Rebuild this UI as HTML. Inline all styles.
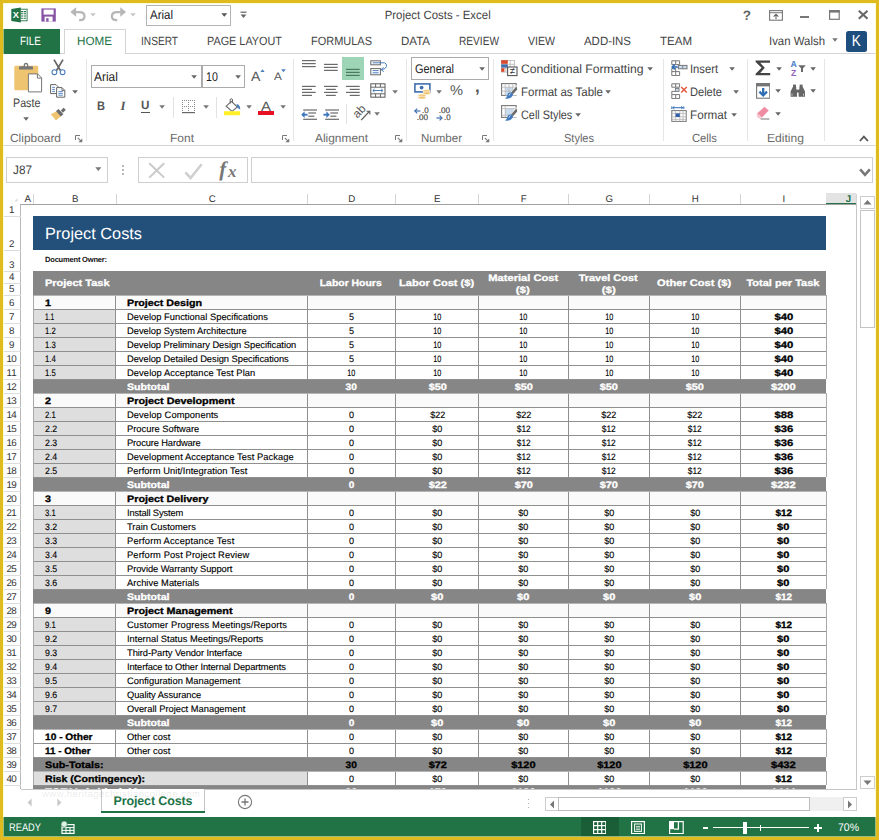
<!DOCTYPE html>
<html lang="en"><head><meta charset="utf-8"><title>Project Costs - Excel</title>
<style>
html,body{margin:0;padding:0}
body{width:879px;height:840px;background:#dfbb1f;position:relative;overflow:hidden;font-family:'Liberation Sans',sans-serif}
.b{position:absolute;display:block}
.t{position:absolute;white-space:pre;display:block;text-rendering:geometricPrecision}
</style></head><body>
<div class="b" style="left:3px;top:3px;width:873px;height:833.5px;background:#fff;"></div>
<span class="t" style="left:382.31px;top:8.60px;font:normal normal 12px/13.80px 'Liberation Sans', sans-serif;color:#444;transform:scaleX(0.9517);transform-origin:50% 50%;">Project Costs - Excel</span>
<div class="b" style="left:3px;top:29px;width:57px;height:24.7px;background:#217346;"></div>
<span class="t" style="left:20.00px;top:35.40px;font:normal normal 12px/13.80px 'Liberation Sans', sans-serif;color:#fff;transform:scaleX(0.8286);transform-origin:0 50%;">FILE</span>
<div class="b" style="left:64px;top:29px;width:62px;height:25.2px;background:#fff;border:1px solid #d4d4d4;box-sizing:border-box;border-bottom:none;"></div>
<span class="t" style="left:77.00px;top:35.40px;font:normal normal 12px/13.80px 'Liberation Sans', sans-serif;color:#217346;transform:scaleX(0.9722);transform-origin:0 50%;">HOME</span>
<span class="t" style="left:141.00px;top:35.40px;font:normal normal 12px/13.80px 'Liberation Sans', sans-serif;color:#444;transform:scaleX(0.8448);transform-origin:0 50%;">INSERT</span>
<span class="t" style="left:207.00px;top:35.40px;font:normal normal 12px/13.80px 'Liberation Sans', sans-serif;color:#444;transform:scaleX(0.9045);transform-origin:0 50%;">PAGE LAYOUT</span>
<span class="t" style="left:311.00px;top:35.40px;font:normal normal 12px/13.80px 'Liberation Sans', sans-serif;color:#444;transform:scaleX(0.9147);transform-origin:0 50%;">FORMULAS</span>
<span class="t" style="left:401.00px;top:35.40px;font:normal normal 12px/13.80px 'Liberation Sans', sans-serif;color:#444;transform:scaleX(0.9592);transform-origin:0 50%;">DATA</span>
<span class="t" style="left:459.00px;top:35.40px;font:normal normal 12px/13.80px 'Liberation Sans', sans-serif;color:#444;transform:scaleX(0.8449);transform-origin:0 50%;">REVIEW</span>
<span class="t" style="left:528.00px;top:35.40px;font:normal normal 12px/13.80px 'Liberation Sans', sans-serif;color:#444;transform:scaleX(0.8803);transform-origin:0 50%;">VIEW</span>
<span class="t" style="left:584.00px;top:35.40px;font:normal normal 12px/13.80px 'Liberation Sans', sans-serif;color:#444;transform:scaleX(0.9525);transform-origin:0 50%;">ADD-INS</span>
<span class="t" style="left:660.00px;top:35.40px;font:normal normal 12px/13.80px 'Liberation Sans', sans-serif;color:#444;transform:scaleX(0.9597);transform-origin:0 50%;">TEAM</span>
<span class="t" style="left:768.50px;top:35.30px;font:normal normal 12px/13.80px 'Liberation Sans', sans-serif;color:#444;transform:scaleX(0.9504);transform-origin:0 50%;">Ivan Walsh</span>
<div class="b" style="left:845.6px;top:31px;width:21.6px;height:21px;background:#1e4e7e;border-radius:2.5px;"></div>
<span class="t" style="left:851.16px;top:32.60px;font:normal normal 16px/18.40px 'Liberation Sans', sans-serif;color:#fff;transform:scaleX(0.8433);transform-origin:50% 50%;">K</span>
<div class="b" style="left:60px;top:53.2px;width:4px;height:1px;background:#d4d4d4;"></div>
<div class="b" style="left:126px;top:53.2px;width:750px;height:1px;background:#d4d4d4;"></div>
<div class="b" style="left:3px;top:145.3px;width:873px;height:1px;background:#d4d4d4;"></div>
<span class="t" style="left:10.00px;top:132.27px;font:normal normal 11.7px/13.45px 'Liberation Sans', sans-serif;color:#6a6a6a;transform:scaleX(1.0194);transform-origin:0 50%;">Clipboard</span>
<span class="t" style="left:170.00px;top:132.27px;font:normal normal 11.7px/13.45px 'Liberation Sans', sans-serif;color:#6a6a6a;transform:scaleX(1.0261);transform-origin:0 50%;">Font</span>
<span class="t" style="left:315.00px;top:132.27px;font:normal normal 11.7px/13.45px 'Liberation Sans', sans-serif;color:#6a6a6a;transform:scaleX(1.0195);transform-origin:0 50%;">Alignment</span>
<span class="t" style="left:421.00px;top:132.27px;font:normal normal 11.7px/13.45px 'Liberation Sans', sans-serif;color:#6a6a6a;transform:scaleX(0.9861);transform-origin:0 50%;">Number</span>
<span class="t" style="left:564.00px;top:132.27px;font:normal normal 11.7px/13.45px 'Liberation Sans', sans-serif;color:#6a6a6a;transform:scaleX(0.9426);transform-origin:0 50%;">Styles</span>
<span class="t" style="left:692.00px;top:132.27px;font:normal normal 11.7px/13.45px 'Liberation Sans', sans-serif;color:#6a6a6a;transform:scaleX(0.9621);transform-origin:0 50%;">Cells</span>
<span class="t" style="left:767.00px;top:132.27px;font:normal normal 11.7px/13.45px 'Liberation Sans', sans-serif;color:#6a6a6a;transform:scaleX(1.0350);transform-origin:0 50%;">Editing</span>
<div class="b" style="left:86.3px;top:59px;width:1px;height:82px;background:#e6e6e6;"></div>
<div class="b" style="left:293px;top:59px;width:1px;height:82px;background:#e6e6e6;"></div>
<div class="b" style="left:405.8px;top:59px;width:1px;height:82px;background:#e6e6e6;"></div>
<div class="b" style="left:493.3px;top:59px;width:1px;height:82px;background:#e6e6e6;"></div>
<div class="b" style="left:663px;top:59px;width:1px;height:82px;background:#e6e6e6;"></div>
<div class="b" style="left:747.3px;top:59px;width:1px;height:82px;background:#e6e6e6;"></div>
<div class="b" style="left:824px;top:59px;width:1px;height:82px;background:#e6e6e6;"></div>
<div class="b" style="left:5.5px;top:157px;width:102.3px;height:26px;background:#fff;border:1px solid #cfcfcf;box-sizing:border-box;"></div>
<span class="t" style="left:13.00px;top:163.13px;font:normal normal 12.3px/14.14px 'Liberation Sans', sans-serif;color:#444;transform:scaleX(0.9582);transform-origin:0 50%;">J87</span>
<div class="b" style="left:138.2px;top:157px;width:109.6px;height:26px;background:#fff;border:1px solid #cfcfcf;box-sizing:border-box;"></div>
<div class="b" style="left:251px;top:157px;width:621.6px;height:26px;background:#fff;border:1px solid #cfcfcf;box-sizing:border-box;"></div>
<span class="t" style="left:24.57px;top:193.82px;font:normal normal 9.7px/11.15px 'Liberation Sans', sans-serif;color:#333;">A</span>
<div class="b" style="left:33px;top:194px;width:1px;height:10px;background:#d4d4d4;"></div>
<span class="t" style="left:72.07px;top:193.82px;font:normal normal 9.7px/11.15px 'Liberation Sans', sans-serif;color:#333;">B</span>
<div class="b" style="left:116px;top:194px;width:1px;height:10px;background:#d4d4d4;"></div>
<span class="t" style="left:208.80px;top:193.82px;font:normal normal 9.7px/11.15px 'Liberation Sans', sans-serif;color:#333;">C</span>
<div class="b" style="left:307px;top:194px;width:1px;height:10px;background:#d4d4d4;"></div>
<span class="t" style="left:348.30px;top:193.82px;font:normal normal 9.7px/11.15px 'Liberation Sans', sans-serif;color:#333;">D</span>
<div class="b" style="left:395px;top:194px;width:1px;height:10px;background:#d4d4d4;"></div>
<span class="t" style="left:434.07px;top:193.82px;font:normal normal 9.7px/11.15px 'Liberation Sans', sans-serif;color:#333;">E</span>
<div class="b" style="left:478px;top:194px;width:1px;height:10px;background:#d4d4d4;"></div>
<span class="t" style="left:520.84px;top:193.82px;font:normal normal 9.7px/11.15px 'Liberation Sans', sans-serif;color:#333;">F</span>
<div class="b" style="left:568px;top:194px;width:1px;height:10px;background:#d4d4d4;"></div>
<span class="t" style="left:605.53px;top:193.82px;font:normal normal 9.7px/11.15px 'Liberation Sans', sans-serif;color:#333;">G</span>
<div class="b" style="left:649px;top:194px;width:1px;height:10px;background:#d4d4d4;"></div>
<span class="t" style="left:691.80px;top:193.82px;font:normal normal 9.7px/11.15px 'Liberation Sans', sans-serif;color:#333;">H</span>
<div class="b" style="left:740px;top:194px;width:1px;height:10px;background:#d4d4d4;"></div>
<span class="t" style="left:782.45px;top:193.82px;font:normal normal 9.7px/11.15px 'Liberation Sans', sans-serif;color:#333;">I</span>
<div class="b" style="left:826px;top:194px;width:1px;height:10px;background:#d4d4d4;"></div>
<div class="b" style="left:826px;top:193px;width:30px;height:11px;background:#e3e3e3;"></div>
<div class="b" style="left:826px;top:203px;width:30px;height:2px;background:#217346;"></div>
<span class="t" style="left:845.80px;top:193.62px;font:normal bold 9.7px/11.15px 'Liberation Sans', sans-serif;color:#217346;">J</span>
<div class="b" style="left:856px;top:194px;width:1px;height:10px;background:#d4d4d4;"></div>
<div class="b" style="left:20.3px;top:204px;width:836px;height:1px;background:#a2a2a2;"></div>
<svg class="b" style="left:13.6px;top:197.6px" width="4" height="4" viewBox="0 0 4 4"><path d="M3.6 0.2 V3.6 H0.2 Z" fill="#dcdcdc"/></svg>
<div class="b" style="left:20.2px;top:204px;width:1px;height:585px;background:#b8b8b8;"></div>
<div class="b" style="left:856px;top:204px;width:1px;height:585px;background:#c6c6c6;"></div>
<span class="t" style="left:8.97px;top:205.06px;font:normal normal 9.8px/11.27px 'Liberation Sans', sans-serif;color:#333;">1</span>
<div class="b" style="left:4px;top:216px;width:17px;height:1px;background:#dcdcdc;"></div>
<span class="t" style="left:8.97px;top:239.06px;font:normal normal 9.8px/11.27px 'Liberation Sans', sans-serif;color:#333;">2</span>
<div class="b" style="left:4px;top:250px;width:17px;height:1px;background:#dcdcdc;"></div>
<span class="t" style="left:8.97px;top:260.06px;font:normal normal 9.8px/11.27px 'Liberation Sans', sans-serif;color:#333;">3</span>
<div class="b" style="left:4px;top:271px;width:17px;height:1px;background:#dcdcdc;"></div>
<span class="t" style="left:8.97px;top:272.06px;font:normal normal 9.8px/11.27px 'Liberation Sans', sans-serif;color:#333;">4</span>
<div class="b" style="left:4px;top:283px;width:17px;height:1px;background:#dcdcdc;"></div>
<span class="t" style="left:8.97px;top:284.06px;font:normal normal 9.8px/11.27px 'Liberation Sans', sans-serif;color:#333;">5</span>
<div class="b" style="left:4px;top:295px;width:17px;height:1px;background:#dcdcdc;"></div>
<span class="t" style="left:8.97px;top:298.06px;font:normal normal 9.8px/11.27px 'Liberation Sans', sans-serif;color:#333;">6</span>
<div class="b" style="left:4px;top:309px;width:17px;height:1px;background:#dcdcdc;"></div>
<span class="t" style="left:8.97px;top:312.06px;font:normal normal 9.8px/11.27px 'Liberation Sans', sans-serif;color:#333;">7</span>
<div class="b" style="left:4px;top:323px;width:17px;height:1px;background:#dcdcdc;"></div>
<span class="t" style="left:8.97px;top:326.06px;font:normal normal 9.8px/11.27px 'Liberation Sans', sans-serif;color:#333;">8</span>
<div class="b" style="left:4px;top:337px;width:17px;height:1px;background:#dcdcdc;"></div>
<span class="t" style="left:8.97px;top:340.06px;font:normal normal 9.8px/11.27px 'Liberation Sans', sans-serif;color:#333;">9</span>
<div class="b" style="left:4px;top:351px;width:17px;height:1px;background:#dcdcdc;"></div>
<span class="t" style="left:6.60px;top:354.06px;font:normal normal 9.8px/11.27px 'Liberation Sans', sans-serif;color:#333;letter-spacing:-0.706px;">10</span>
<div class="b" style="left:4px;top:365px;width:17px;height:1px;background:#dcdcdc;"></div>
<span class="t" style="left:6.60px;top:368.06px;font:normal normal 9.8px/11.27px 'Liberation Sans', sans-serif;color:#333;letter-spacing:0.028px;">11</span>
<div class="b" style="left:4px;top:379px;width:17px;height:1px;background:#dcdcdc;"></div>
<span class="t" style="left:6.60px;top:382.06px;font:normal normal 9.8px/11.27px 'Liberation Sans', sans-serif;color:#333;letter-spacing:-0.706px;">12</span>
<div class="b" style="left:4px;top:393px;width:17px;height:1px;background:#dcdcdc;"></div>
<span class="t" style="left:6.60px;top:396.06px;font:normal normal 9.8px/11.27px 'Liberation Sans', sans-serif;color:#333;letter-spacing:-0.706px;">13</span>
<div class="b" style="left:4px;top:407px;width:17px;height:1px;background:#dcdcdc;"></div>
<span class="t" style="left:6.60px;top:410.06px;font:normal normal 9.8px/11.27px 'Liberation Sans', sans-serif;color:#333;letter-spacing:-0.706px;">14</span>
<div class="b" style="left:4px;top:421px;width:17px;height:1px;background:#dcdcdc;"></div>
<span class="t" style="left:6.60px;top:424.06px;font:normal normal 9.8px/11.27px 'Liberation Sans', sans-serif;color:#333;letter-spacing:-0.706px;">15</span>
<div class="b" style="left:4px;top:435px;width:17px;height:1px;background:#dcdcdc;"></div>
<span class="t" style="left:6.60px;top:438.06px;font:normal normal 9.8px/11.27px 'Liberation Sans', sans-serif;color:#333;letter-spacing:-0.706px;">16</span>
<div class="b" style="left:4px;top:449px;width:17px;height:1px;background:#dcdcdc;"></div>
<span class="t" style="left:6.60px;top:452.06px;font:normal normal 9.8px/11.27px 'Liberation Sans', sans-serif;color:#333;letter-spacing:-0.706px;">17</span>
<div class="b" style="left:4px;top:463px;width:17px;height:1px;background:#dcdcdc;"></div>
<span class="t" style="left:6.60px;top:466.06px;font:normal normal 9.8px/11.27px 'Liberation Sans', sans-serif;color:#333;letter-spacing:-0.706px;">18</span>
<div class="b" style="left:4px;top:477px;width:17px;height:1px;background:#dcdcdc;"></div>
<span class="t" style="left:6.60px;top:480.06px;font:normal normal 9.8px/11.27px 'Liberation Sans', sans-serif;color:#333;letter-spacing:-0.706px;">19</span>
<div class="b" style="left:4px;top:491px;width:17px;height:1px;background:#dcdcdc;"></div>
<span class="t" style="left:6.60px;top:494.06px;font:normal normal 9.8px/11.27px 'Liberation Sans', sans-serif;color:#333;letter-spacing:-0.706px;">20</span>
<div class="b" style="left:4px;top:505px;width:17px;height:1px;background:#dcdcdc;"></div>
<span class="t" style="left:6.60px;top:508.07px;font:normal normal 9.8px/11.27px 'Liberation Sans', sans-serif;color:#333;letter-spacing:-0.706px;">21</span>
<div class="b" style="left:4px;top:519px;width:17px;height:1px;background:#dcdcdc;"></div>
<span class="t" style="left:6.60px;top:522.07px;font:normal normal 9.8px/11.27px 'Liberation Sans', sans-serif;color:#333;letter-spacing:-0.706px;">22</span>
<div class="b" style="left:4px;top:533px;width:17px;height:1px;background:#dcdcdc;"></div>
<span class="t" style="left:6.60px;top:536.07px;font:normal normal 9.8px/11.27px 'Liberation Sans', sans-serif;color:#333;letter-spacing:-0.706px;">23</span>
<div class="b" style="left:4px;top:547px;width:17px;height:1px;background:#dcdcdc;"></div>
<span class="t" style="left:6.60px;top:550.07px;font:normal normal 9.8px/11.27px 'Liberation Sans', sans-serif;color:#333;letter-spacing:-0.706px;">24</span>
<div class="b" style="left:4px;top:561px;width:17px;height:1px;background:#dcdcdc;"></div>
<span class="t" style="left:6.60px;top:564.07px;font:normal normal 9.8px/11.27px 'Liberation Sans', sans-serif;color:#333;letter-spacing:-0.706px;">25</span>
<div class="b" style="left:4px;top:575px;width:17px;height:1px;background:#dcdcdc;"></div>
<span class="t" style="left:6.60px;top:578.07px;font:normal normal 9.8px/11.27px 'Liberation Sans', sans-serif;color:#333;letter-spacing:-0.706px;">26</span>
<div class="b" style="left:4px;top:589px;width:17px;height:1px;background:#dcdcdc;"></div>
<span class="t" style="left:6.60px;top:592.07px;font:normal normal 9.8px/11.27px 'Liberation Sans', sans-serif;color:#333;letter-spacing:-0.706px;">27</span>
<div class="b" style="left:4px;top:603px;width:17px;height:1px;background:#dcdcdc;"></div>
<span class="t" style="left:6.60px;top:606.07px;font:normal normal 9.8px/11.27px 'Liberation Sans', sans-serif;color:#333;letter-spacing:-0.706px;">28</span>
<div class="b" style="left:4px;top:617px;width:17px;height:1px;background:#dcdcdc;"></div>
<span class="t" style="left:6.60px;top:620.07px;font:normal normal 9.8px/11.27px 'Liberation Sans', sans-serif;color:#333;letter-spacing:-0.706px;">29</span>
<div class="b" style="left:4px;top:631px;width:17px;height:1px;background:#dcdcdc;"></div>
<span class="t" style="left:6.60px;top:634.07px;font:normal normal 9.8px/11.27px 'Liberation Sans', sans-serif;color:#333;letter-spacing:-0.706px;">30</span>
<div class="b" style="left:4px;top:645px;width:17px;height:1px;background:#dcdcdc;"></div>
<span class="t" style="left:6.60px;top:648.07px;font:normal normal 9.8px/11.27px 'Liberation Sans', sans-serif;color:#333;letter-spacing:-0.706px;">31</span>
<div class="b" style="left:4px;top:659px;width:17px;height:1px;background:#dcdcdc;"></div>
<span class="t" style="left:6.60px;top:662.07px;font:normal normal 9.8px/11.27px 'Liberation Sans', sans-serif;color:#333;letter-spacing:-0.706px;">32</span>
<div class="b" style="left:4px;top:673px;width:17px;height:1px;background:#dcdcdc;"></div>
<span class="t" style="left:6.60px;top:676.07px;font:normal normal 9.8px/11.27px 'Liberation Sans', sans-serif;color:#333;letter-spacing:-0.706px;">33</span>
<div class="b" style="left:4px;top:687px;width:17px;height:1px;background:#dcdcdc;"></div>
<span class="t" style="left:6.60px;top:690.07px;font:normal normal 9.8px/11.27px 'Liberation Sans', sans-serif;color:#333;letter-spacing:-0.706px;">34</span>
<div class="b" style="left:4px;top:701px;width:17px;height:1px;background:#dcdcdc;"></div>
<span class="t" style="left:6.60px;top:704.07px;font:normal normal 9.8px/11.27px 'Liberation Sans', sans-serif;color:#333;letter-spacing:-0.706px;">35</span>
<div class="b" style="left:4px;top:715px;width:17px;height:1px;background:#dcdcdc;"></div>
<span class="t" style="left:6.60px;top:718.07px;font:normal normal 9.8px/11.27px 'Liberation Sans', sans-serif;color:#333;letter-spacing:-0.706px;">36</span>
<div class="b" style="left:4px;top:729px;width:17px;height:1px;background:#dcdcdc;"></div>
<span class="t" style="left:6.60px;top:732.07px;font:normal normal 9.8px/11.27px 'Liberation Sans', sans-serif;color:#333;letter-spacing:-0.706px;">37</span>
<div class="b" style="left:4px;top:743px;width:17px;height:1px;background:#dcdcdc;"></div>
<span class="t" style="left:6.60px;top:746.07px;font:normal normal 9.8px/11.27px 'Liberation Sans', sans-serif;color:#333;letter-spacing:-0.706px;">38</span>
<div class="b" style="left:4px;top:757px;width:17px;height:1px;background:#dcdcdc;"></div>
<span class="t" style="left:6.60px;top:760.07px;font:normal normal 9.8px/11.27px 'Liberation Sans', sans-serif;color:#333;letter-spacing:-0.706px;">39</span>
<div class="b" style="left:4px;top:771px;width:17px;height:1px;background:#dcdcdc;"></div>
<span class="t" style="left:6.60px;top:774.07px;font:normal normal 9.8px/11.27px 'Liberation Sans', sans-serif;color:#333;letter-spacing:-0.706px;">40</span>
<div class="b" style="left:4px;top:785px;width:17px;height:1px;background:#dcdcdc;"></div>
<div class="b" style="left:33px;top:216px;width:793px;height:33.6px;background:#22507a;"></div>
<span class="t" style="left:45.00px;top:225.13px;font:normal normal 16.3px/18.75px 'Liberation Sans', sans-serif;color:#fff;letter-spacing:0.014px;">Project Costs</span>
<span class="t" style="left:45.00px;top:256.39px;font:normal bold 7.5px/8.62px 'Liberation Sans', sans-serif;color:#111;letter-spacing:-0.185px;">Document Owner:</span>
<div class="b" style="left:33px;top:271px;width:793px;height:24.3px;background:#868686;"></div>
<span class="t" style="left:45.00px;top:277.94px;font:normal bold 9.33px/10.73px 'Liberation Sans', sans-serif;color:#fff;transform:scaleX(1.1771);transform-origin:0 50%;-webkit-text-stroke:0.3px #fff;">Project Task</span>
<span class="t" style="left:323.27px;top:277.94px;font:normal bold 9.33px/10.73px 'Liberation Sans', sans-serif;color:#fff;transform:scaleX(1.1177);transform-origin:50% 50%;-webkit-text-stroke:0.3px #fff;">Labor Hours</span>
<span class="t" style="left:405.38px;top:277.94px;font:normal bold 9.33px/10.73px 'Liberation Sans', sans-serif;color:#fff;transform:scaleX(1.1861);transform-origin:50% 50%;-webkit-text-stroke:0.3px #fff;">Labor Cost ($)</span>
<span class="t" style="left:493.71px;top:272.64px;font:normal bold 9.33px/10.73px 'Liberation Sans', sans-serif;color:#fff;transform:scaleX(1.1950);transform-origin:50% 50%;-webkit-text-stroke:0.3px #fff;">Material Cost</span>
<span class="t" style="left:517.30px;top:284.64px;font:normal bold 9.33px/10.73px 'Liberation Sans', sans-serif;color:#fff;transform:scaleX(1.2274);transform-origin:50% 50%;-webkit-text-stroke:0.3px #fff;">($)</span>
<span class="t" style="left:583.35px;top:272.64px;font:normal bold 9.33px/10.73px 'Liberation Sans', sans-serif;color:#fff;transform:scaleX(1.1730);transform-origin:50% 50%;-webkit-text-stroke:0.3px #fff;">Travel Cost</span>
<span class="t" style="left:602.80px;top:284.64px;font:normal bold 9.33px/10.73px 'Liberation Sans', sans-serif;color:#fff;transform:scaleX(1.2274);transform-origin:50% 50%;-webkit-text-stroke:0.3px #fff;">($)</span>
<span class="t" style="left:663.40px;top:277.94px;font:normal bold 9.33px/10.73px 'Liberation Sans', sans-serif;color:#fff;transform:scaleX(1.1897);transform-origin:50% 50%;-webkit-text-stroke:0.3px #fff;">Other Cost ($)</span>
<span class="t" style="left:752.07px;top:277.94px;font:normal bold 9.33px/10.73px 'Liberation Sans', sans-serif;color:#fff;transform:scaleX(1.1801);transform-origin:50% 50%;-webkit-text-stroke:0.3px #fff;">Total per Task</span>
<div class="b" style="left:33px;top:296px;width:793px;height:13px;background:#fafafa;"></div>
<span class="t" style="left:45.00px;top:298.49px;font:normal bold 9.33px/10.73px 'Liberation Sans', sans-serif;color:#000;transform:scaleX(1.1600);transform-origin:0 50%;-webkit-text-stroke:0.3px #000;">1</span>
<span class="t" style="left:127.00px;top:298.49px;font:normal bold 9.33px/10.73px 'Liberation Sans', sans-serif;color:#000;transform:scaleX(1.1481);transform-origin:0 50%;-webkit-text-stroke:0.3px #000;">Project Design</span>
<div class="b" style="left:33px;top:309px;width:82px;height:14px;background:#dedede;"></div>
<span class="t" style="left:45.00px;top:312.04px;font:normal normal 9.33px/10.73px 'Liberation Sans', sans-serif;color:#000;transform:scaleX(0.7200);transform-origin:0 50%;-webkit-text-stroke:0.12px #000;">1.1</span>
<span class="t" style="left:127.00px;top:312.04px;font:normal normal 9.33px/10.73px 'Liberation Sans', sans-serif;color:#000;letter-spacing:0.025px;-webkit-text-stroke:0.12px #000;">Develop Functional Specifications</span>
<span class="t" style="left:348.90px;top:312.04px;font:normal normal 9.33px/10.73px 'Liberation Sans', sans-serif;color:#000;transform:scaleX(0.9700);transform-origin:50% 50%;-webkit-text-stroke:0.12px #000;">5</span>
<span class="t" style="left:432.30px;top:312.04px;font:normal normal 9.33px/10.73px 'Liberation Sans', sans-serif;color:#000;transform:scaleX(0.7800);transform-origin:50% 50%;-webkit-text-stroke:0.12px #000;">10</span>
<span class="t" style="left:518.30px;top:312.04px;font:normal normal 9.33px/10.73px 'Liberation Sans', sans-serif;color:#000;transform:scaleX(0.7800);transform-origin:50% 50%;-webkit-text-stroke:0.12px #000;">10</span>
<span class="t" style="left:603.80px;top:312.04px;font:normal normal 9.33px/10.73px 'Liberation Sans', sans-serif;color:#000;transform:scaleX(0.7800);transform-origin:50% 50%;-webkit-text-stroke:0.12px #000;">10</span>
<span class="t" style="left:689.80px;top:312.04px;font:normal normal 9.33px/10.73px 'Liberation Sans', sans-serif;color:#000;transform:scaleX(0.7800);transform-origin:50% 50%;-webkit-text-stroke:0.12px #000;">10</span>
<span class="t" style="left:775.71px;top:312.49px;font:normal bold 9.33px/10.73px 'Liberation Sans', sans-serif;color:#000;transform:scaleX(1.2068);transform-origin:50% 50%;-webkit-text-stroke:0.3px #000;">$40</span>
<div class="b" style="left:33px;top:323px;width:82px;height:14px;background:#dedede;"></div>
<span class="t" style="left:45.00px;top:326.04px;font:normal normal 9.33px/10.73px 'Liberation Sans', sans-serif;color:#000;transform:scaleX(0.8300);transform-origin:0 50%;-webkit-text-stroke:0.12px #000;">1.2</span>
<span class="t" style="left:127.00px;top:326.04px;font:normal normal 9.33px/10.73px 'Liberation Sans', sans-serif;color:#000;letter-spacing:0.001px;-webkit-text-stroke:0.12px #000;">Develop System Architecture</span>
<span class="t" style="left:348.90px;top:326.04px;font:normal normal 9.33px/10.73px 'Liberation Sans', sans-serif;color:#000;transform:scaleX(0.9700);transform-origin:50% 50%;-webkit-text-stroke:0.12px #000;">5</span>
<span class="t" style="left:432.30px;top:326.04px;font:normal normal 9.33px/10.73px 'Liberation Sans', sans-serif;color:#000;transform:scaleX(0.7800);transform-origin:50% 50%;-webkit-text-stroke:0.12px #000;">10</span>
<span class="t" style="left:518.30px;top:326.04px;font:normal normal 9.33px/10.73px 'Liberation Sans', sans-serif;color:#000;transform:scaleX(0.7800);transform-origin:50% 50%;-webkit-text-stroke:0.12px #000;">10</span>
<span class="t" style="left:603.80px;top:326.04px;font:normal normal 9.33px/10.73px 'Liberation Sans', sans-serif;color:#000;transform:scaleX(0.7800);transform-origin:50% 50%;-webkit-text-stroke:0.12px #000;">10</span>
<span class="t" style="left:689.80px;top:326.04px;font:normal normal 9.33px/10.73px 'Liberation Sans', sans-serif;color:#000;transform:scaleX(0.7800);transform-origin:50% 50%;-webkit-text-stroke:0.12px #000;">10</span>
<span class="t" style="left:775.71px;top:326.49px;font:normal bold 9.33px/10.73px 'Liberation Sans', sans-serif;color:#000;transform:scaleX(1.2068);transform-origin:50% 50%;-webkit-text-stroke:0.3px #000;">$40</span>
<div class="b" style="left:33px;top:337px;width:82px;height:14px;background:#dedede;"></div>
<span class="t" style="left:45.00px;top:340.04px;font:normal normal 9.33px/10.73px 'Liberation Sans', sans-serif;color:#000;transform:scaleX(0.8300);transform-origin:0 50%;-webkit-text-stroke:0.12px #000;">1.3</span>
<span class="t" style="left:127.00px;top:340.04px;font:normal normal 9.33px/10.73px 'Liberation Sans', sans-serif;color:#000;letter-spacing:-0.033px;-webkit-text-stroke:0.12px #000;">Develop Preliminary Design Specification</span>
<span class="t" style="left:348.90px;top:340.04px;font:normal normal 9.33px/10.73px 'Liberation Sans', sans-serif;color:#000;transform:scaleX(0.9700);transform-origin:50% 50%;-webkit-text-stroke:0.12px #000;">5</span>
<span class="t" style="left:432.30px;top:340.04px;font:normal normal 9.33px/10.73px 'Liberation Sans', sans-serif;color:#000;transform:scaleX(0.7800);transform-origin:50% 50%;-webkit-text-stroke:0.12px #000;">10</span>
<span class="t" style="left:518.30px;top:340.04px;font:normal normal 9.33px/10.73px 'Liberation Sans', sans-serif;color:#000;transform:scaleX(0.7800);transform-origin:50% 50%;-webkit-text-stroke:0.12px #000;">10</span>
<span class="t" style="left:603.80px;top:340.04px;font:normal normal 9.33px/10.73px 'Liberation Sans', sans-serif;color:#000;transform:scaleX(0.7800);transform-origin:50% 50%;-webkit-text-stroke:0.12px #000;">10</span>
<span class="t" style="left:689.80px;top:340.04px;font:normal normal 9.33px/10.73px 'Liberation Sans', sans-serif;color:#000;transform:scaleX(0.7800);transform-origin:50% 50%;-webkit-text-stroke:0.12px #000;">10</span>
<span class="t" style="left:775.71px;top:340.49px;font:normal bold 9.33px/10.73px 'Liberation Sans', sans-serif;color:#000;transform:scaleX(1.2068);transform-origin:50% 50%;-webkit-text-stroke:0.3px #000;">$40</span>
<div class="b" style="left:33px;top:351px;width:82px;height:14px;background:#dedede;"></div>
<span class="t" style="left:45.00px;top:354.04px;font:normal normal 9.33px/10.73px 'Liberation Sans', sans-serif;color:#000;transform:scaleX(0.8300);transform-origin:0 50%;-webkit-text-stroke:0.12px #000;">1.4</span>
<span class="t" style="left:127.00px;top:354.04px;font:normal normal 9.33px/10.73px 'Liberation Sans', sans-serif;color:#000;letter-spacing:-0.028px;-webkit-text-stroke:0.12px #000;">Develop Detailed Design Specifications</span>
<span class="t" style="left:348.90px;top:354.04px;font:normal normal 9.33px/10.73px 'Liberation Sans', sans-serif;color:#000;transform:scaleX(0.9700);transform-origin:50% 50%;-webkit-text-stroke:0.12px #000;">5</span>
<span class="t" style="left:432.30px;top:354.04px;font:normal normal 9.33px/10.73px 'Liberation Sans', sans-serif;color:#000;transform:scaleX(0.7800);transform-origin:50% 50%;-webkit-text-stroke:0.12px #000;">10</span>
<span class="t" style="left:518.30px;top:354.04px;font:normal normal 9.33px/10.73px 'Liberation Sans', sans-serif;color:#000;transform:scaleX(0.7800);transform-origin:50% 50%;-webkit-text-stroke:0.12px #000;">10</span>
<span class="t" style="left:603.80px;top:354.04px;font:normal normal 9.33px/10.73px 'Liberation Sans', sans-serif;color:#000;transform:scaleX(0.7800);transform-origin:50% 50%;-webkit-text-stroke:0.12px #000;">10</span>
<span class="t" style="left:689.80px;top:354.04px;font:normal normal 9.33px/10.73px 'Liberation Sans', sans-serif;color:#000;transform:scaleX(0.7800);transform-origin:50% 50%;-webkit-text-stroke:0.12px #000;">10</span>
<span class="t" style="left:775.71px;top:354.49px;font:normal bold 9.33px/10.73px 'Liberation Sans', sans-serif;color:#000;transform:scaleX(1.2068);transform-origin:50% 50%;-webkit-text-stroke:0.3px #000;">$40</span>
<div class="b" style="left:33px;top:365px;width:82px;height:14px;background:#dedede;"></div>
<span class="t" style="left:45.00px;top:368.04px;font:normal normal 9.33px/10.73px 'Liberation Sans', sans-serif;color:#000;transform:scaleX(0.8300);transform-origin:0 50%;-webkit-text-stroke:0.12px #000;">1.5</span>
<span class="t" style="left:127.00px;top:368.04px;font:normal normal 9.33px/10.73px 'Liberation Sans', sans-serif;color:#000;letter-spacing:0.091px;-webkit-text-stroke:0.12px #000;">Develop Acceptance Test Plan</span>
<span class="t" style="left:346.30px;top:368.04px;font:normal normal 9.33px/10.73px 'Liberation Sans', sans-serif;color:#000;transform:scaleX(0.7800);transform-origin:50% 50%;-webkit-text-stroke:0.12px #000;">10</span>
<span class="t" style="left:432.30px;top:368.04px;font:normal normal 9.33px/10.73px 'Liberation Sans', sans-serif;color:#000;transform:scaleX(0.7800);transform-origin:50% 50%;-webkit-text-stroke:0.12px #000;">10</span>
<span class="t" style="left:518.30px;top:368.04px;font:normal normal 9.33px/10.73px 'Liberation Sans', sans-serif;color:#000;transform:scaleX(0.7800);transform-origin:50% 50%;-webkit-text-stroke:0.12px #000;">10</span>
<span class="t" style="left:603.80px;top:368.04px;font:normal normal 9.33px/10.73px 'Liberation Sans', sans-serif;color:#000;transform:scaleX(0.7800);transform-origin:50% 50%;-webkit-text-stroke:0.12px #000;">10</span>
<span class="t" style="left:689.80px;top:368.04px;font:normal normal 9.33px/10.73px 'Liberation Sans', sans-serif;color:#000;transform:scaleX(0.7800);transform-origin:50% 50%;-webkit-text-stroke:0.12px #000;">10</span>
<span class="t" style="left:775.71px;top:368.49px;font:normal bold 9.33px/10.73px 'Liberation Sans', sans-serif;color:#000;transform:scaleX(1.2068);transform-origin:50% 50%;-webkit-text-stroke:0.3px #000;">$40</span>
<div class="b" style="left:33px;top:379px;width:793px;height:14.3px;background:#868686;"></div>
<span class="t" style="left:127.00px;top:382.49px;font:normal bold 9.33px/10.73px 'Liberation Sans', sans-serif;color:#fff;transform:scaleX(1.1390);transform-origin:0 50%;-webkit-text-stroke:0.3px #fff;">Subtotal</span>
<span class="t" style="left:346.30px;top:382.49px;font:normal bold 9.33px/10.73px 'Liberation Sans', sans-serif;color:#fff;transform:scaleX(1.0875);transform-origin:50% 50%;-webkit-text-stroke:0.3px #fff;">30</span>
<span class="t" style="left:429.71px;top:382.49px;font:normal bold 9.33px/10.73px 'Liberation Sans', sans-serif;color:#fff;transform:scaleX(1.1747);transform-origin:50% 50%;-webkit-text-stroke:0.3px #fff;">$50</span>
<span class="t" style="left:515.71px;top:382.49px;font:normal bold 9.33px/10.73px 'Liberation Sans', sans-serif;color:#fff;transform:scaleX(1.1747);transform-origin:50% 50%;-webkit-text-stroke:0.3px #fff;">$50</span>
<span class="t" style="left:601.21px;top:382.49px;font:normal bold 9.33px/10.73px 'Liberation Sans', sans-serif;color:#fff;transform:scaleX(1.1747);transform-origin:50% 50%;-webkit-text-stroke:0.3px #fff;">$50</span>
<span class="t" style="left:687.21px;top:382.49px;font:normal bold 9.33px/10.73px 'Liberation Sans', sans-serif;color:#fff;transform:scaleX(1.1747);transform-origin:50% 50%;-webkit-text-stroke:0.3px #fff;">$50</span>
<span class="t" style="left:773.12px;top:382.49px;font:normal bold 9.33px/10.73px 'Liberation Sans', sans-serif;color:#fff;transform:scaleX(1.2039);transform-origin:50% 50%;-webkit-text-stroke:0.3px #fff;">$200</span>
<div class="b" style="left:33px;top:394px;width:793px;height:13px;background:#fafafa;"></div>
<span class="t" style="left:45.00px;top:396.49px;font:normal bold 9.33px/10.73px 'Liberation Sans', sans-serif;color:#000;transform:scaleX(1.1600);transform-origin:0 50%;-webkit-text-stroke:0.3px #000;">2</span>
<span class="t" style="left:127.00px;top:396.49px;font:normal bold 9.33px/10.73px 'Liberation Sans', sans-serif;color:#000;transform:scaleX(1.1584);transform-origin:0 50%;-webkit-text-stroke:0.3px #000;">Project Development</span>
<div class="b" style="left:33px;top:407px;width:82px;height:14px;background:#dedede;"></div>
<span class="t" style="left:45.00px;top:410.04px;font:normal normal 9.33px/10.73px 'Liberation Sans', sans-serif;color:#000;transform:scaleX(0.8300);transform-origin:0 50%;-webkit-text-stroke:0.12px #000;">2.1</span>
<span class="t" style="left:127.00px;top:410.04px;font:normal normal 9.33px/10.73px 'Liberation Sans', sans-serif;color:#000;letter-spacing:0.093px;-webkit-text-stroke:0.12px #000;">Develop Components</span>
<span class="t" style="left:348.90px;top:410.04px;font:normal normal 9.33px/10.73px 'Liberation Sans', sans-serif;color:#000;transform:scaleX(0.9700);transform-origin:50% 50%;-webkit-text-stroke:0.12px #000;">0</span>
<span class="t" style="left:429.71px;top:410.04px;font:normal normal 9.33px/10.73px 'Liberation Sans', sans-serif;color:#000;transform:scaleX(0.9700);transform-origin:50% 50%;-webkit-text-stroke:0.12px #000;">$22</span>
<span class="t" style="left:515.71px;top:410.04px;font:normal normal 9.33px/10.73px 'Liberation Sans', sans-serif;color:#000;transform:scaleX(0.9700);transform-origin:50% 50%;-webkit-text-stroke:0.12px #000;">$22</span>
<span class="t" style="left:601.21px;top:410.04px;font:normal normal 9.33px/10.73px 'Liberation Sans', sans-serif;color:#000;transform:scaleX(0.9700);transform-origin:50% 50%;-webkit-text-stroke:0.12px #000;">$22</span>
<span class="t" style="left:687.21px;top:410.04px;font:normal normal 9.33px/10.73px 'Liberation Sans', sans-serif;color:#000;transform:scaleX(0.9700);transform-origin:50% 50%;-webkit-text-stroke:0.12px #000;">$22</span>
<span class="t" style="left:775.71px;top:410.49px;font:normal bold 9.33px/10.73px 'Liberation Sans', sans-serif;color:#000;transform:scaleX(1.2068);transform-origin:50% 50%;-webkit-text-stroke:0.3px #000;">$88</span>
<div class="b" style="left:33px;top:421px;width:82px;height:14px;background:#dedede;"></div>
<span class="t" style="left:45.00px;top:424.04px;font:normal normal 9.33px/10.73px 'Liberation Sans', sans-serif;color:#000;transform:scaleX(0.9400);transform-origin:0 50%;-webkit-text-stroke:0.12px #000;">2.2</span>
<span class="t" style="left:127.00px;top:424.04px;font:normal normal 9.33px/10.73px 'Liberation Sans', sans-serif;color:#000;letter-spacing:0.015px;-webkit-text-stroke:0.12px #000;">Procure Software</span>
<span class="t" style="left:348.90px;top:424.04px;font:normal normal 9.33px/10.73px 'Liberation Sans', sans-serif;color:#000;transform:scaleX(0.9700);transform-origin:50% 50%;-webkit-text-stroke:0.12px #000;">0</span>
<span class="t" style="left:432.30px;top:424.04px;font:normal normal 9.33px/10.73px 'Liberation Sans', sans-serif;color:#000;transform:scaleX(0.9700);transform-origin:50% 50%;-webkit-text-stroke:0.12px #000;">$0</span>
<span class="t" style="left:515.71px;top:424.04px;font:normal normal 9.33px/10.73px 'Liberation Sans', sans-serif;color:#000;transform:scaleX(0.9000);transform-origin:50% 50%;-webkit-text-stroke:0.12px #000;">$12</span>
<span class="t" style="left:601.21px;top:424.04px;font:normal normal 9.33px/10.73px 'Liberation Sans', sans-serif;color:#000;transform:scaleX(0.9000);transform-origin:50% 50%;-webkit-text-stroke:0.12px #000;">$12</span>
<span class="t" style="left:687.21px;top:424.04px;font:normal normal 9.33px/10.73px 'Liberation Sans', sans-serif;color:#000;transform:scaleX(0.9000);transform-origin:50% 50%;-webkit-text-stroke:0.12px #000;">$12</span>
<span class="t" style="left:775.71px;top:424.49px;font:normal bold 9.33px/10.73px 'Liberation Sans', sans-serif;color:#000;transform:scaleX(1.2068);transform-origin:50% 50%;-webkit-text-stroke:0.3px #000;">$36</span>
<div class="b" style="left:33px;top:435px;width:82px;height:14px;background:#dedede;"></div>
<span class="t" style="left:45.00px;top:438.04px;font:normal normal 9.33px/10.73px 'Liberation Sans', sans-serif;color:#000;transform:scaleX(0.9400);transform-origin:0 50%;-webkit-text-stroke:0.12px #000;">2.3</span>
<span class="t" style="left:127.00px;top:438.04px;font:normal normal 9.33px/10.73px 'Liberation Sans', sans-serif;color:#000;letter-spacing:-0.127px;-webkit-text-stroke:0.12px #000;">Procure Hardware</span>
<span class="t" style="left:348.90px;top:438.04px;font:normal normal 9.33px/10.73px 'Liberation Sans', sans-serif;color:#000;transform:scaleX(0.9700);transform-origin:50% 50%;-webkit-text-stroke:0.12px #000;">0</span>
<span class="t" style="left:432.30px;top:438.04px;font:normal normal 9.33px/10.73px 'Liberation Sans', sans-serif;color:#000;transform:scaleX(0.9700);transform-origin:50% 50%;-webkit-text-stroke:0.12px #000;">$0</span>
<span class="t" style="left:515.71px;top:438.04px;font:normal normal 9.33px/10.73px 'Liberation Sans', sans-serif;color:#000;transform:scaleX(0.9000);transform-origin:50% 50%;-webkit-text-stroke:0.12px #000;">$12</span>
<span class="t" style="left:601.21px;top:438.04px;font:normal normal 9.33px/10.73px 'Liberation Sans', sans-serif;color:#000;transform:scaleX(0.9000);transform-origin:50% 50%;-webkit-text-stroke:0.12px #000;">$12</span>
<span class="t" style="left:687.21px;top:438.04px;font:normal normal 9.33px/10.73px 'Liberation Sans', sans-serif;color:#000;transform:scaleX(0.9000);transform-origin:50% 50%;-webkit-text-stroke:0.12px #000;">$12</span>
<span class="t" style="left:775.71px;top:438.49px;font:normal bold 9.33px/10.73px 'Liberation Sans', sans-serif;color:#000;transform:scaleX(1.2068);transform-origin:50% 50%;-webkit-text-stroke:0.3px #000;">$36</span>
<div class="b" style="left:33px;top:449px;width:82px;height:14px;background:#dedede;"></div>
<span class="t" style="left:45.00px;top:452.04px;font:normal normal 9.33px/10.73px 'Liberation Sans', sans-serif;color:#000;transform:scaleX(0.9400);transform-origin:0 50%;-webkit-text-stroke:0.12px #000;">2.4</span>
<span class="t" style="left:127.00px;top:452.04px;font:normal normal 9.33px/10.73px 'Liberation Sans', sans-serif;color:#000;letter-spacing:0.076px;-webkit-text-stroke:0.12px #000;">Development Acceptance Test Package</span>
<span class="t" style="left:348.90px;top:452.04px;font:normal normal 9.33px/10.73px 'Liberation Sans', sans-serif;color:#000;transform:scaleX(0.9700);transform-origin:50% 50%;-webkit-text-stroke:0.12px #000;">0</span>
<span class="t" style="left:432.30px;top:452.04px;font:normal normal 9.33px/10.73px 'Liberation Sans', sans-serif;color:#000;transform:scaleX(0.9700);transform-origin:50% 50%;-webkit-text-stroke:0.12px #000;">$0</span>
<span class="t" style="left:515.71px;top:452.04px;font:normal normal 9.33px/10.73px 'Liberation Sans', sans-serif;color:#000;transform:scaleX(0.9000);transform-origin:50% 50%;-webkit-text-stroke:0.12px #000;">$12</span>
<span class="t" style="left:601.21px;top:452.04px;font:normal normal 9.33px/10.73px 'Liberation Sans', sans-serif;color:#000;transform:scaleX(0.9000);transform-origin:50% 50%;-webkit-text-stroke:0.12px #000;">$12</span>
<span class="t" style="left:687.21px;top:452.04px;font:normal normal 9.33px/10.73px 'Liberation Sans', sans-serif;color:#000;transform:scaleX(0.9000);transform-origin:50% 50%;-webkit-text-stroke:0.12px #000;">$12</span>
<span class="t" style="left:775.71px;top:452.49px;font:normal bold 9.33px/10.73px 'Liberation Sans', sans-serif;color:#000;transform:scaleX(1.2068);transform-origin:50% 50%;-webkit-text-stroke:0.3px #000;">$36</span>
<div class="b" style="left:33px;top:463px;width:82px;height:14px;background:#dedede;"></div>
<span class="t" style="left:45.00px;top:466.04px;font:normal normal 9.33px/10.73px 'Liberation Sans', sans-serif;color:#000;transform:scaleX(0.9400);transform-origin:0 50%;-webkit-text-stroke:0.12px #000;">2.5</span>
<span class="t" style="left:127.00px;top:466.04px;font:normal normal 9.33px/10.73px 'Liberation Sans', sans-serif;color:#000;letter-spacing:0.062px;-webkit-text-stroke:0.12px #000;">Perform Unit/Integration Test</span>
<span class="t" style="left:348.90px;top:466.04px;font:normal normal 9.33px/10.73px 'Liberation Sans', sans-serif;color:#000;transform:scaleX(0.9700);transform-origin:50% 50%;-webkit-text-stroke:0.12px #000;">0</span>
<span class="t" style="left:432.30px;top:466.04px;font:normal normal 9.33px/10.73px 'Liberation Sans', sans-serif;color:#000;transform:scaleX(0.9700);transform-origin:50% 50%;-webkit-text-stroke:0.12px #000;">$0</span>
<span class="t" style="left:515.71px;top:466.04px;font:normal normal 9.33px/10.73px 'Liberation Sans', sans-serif;color:#000;transform:scaleX(0.9000);transform-origin:50% 50%;-webkit-text-stroke:0.12px #000;">$12</span>
<span class="t" style="left:601.21px;top:466.04px;font:normal normal 9.33px/10.73px 'Liberation Sans', sans-serif;color:#000;transform:scaleX(0.9000);transform-origin:50% 50%;-webkit-text-stroke:0.12px #000;">$12</span>
<span class="t" style="left:687.21px;top:466.04px;font:normal normal 9.33px/10.73px 'Liberation Sans', sans-serif;color:#000;transform:scaleX(0.9000);transform-origin:50% 50%;-webkit-text-stroke:0.12px #000;">$12</span>
<span class="t" style="left:775.71px;top:466.49px;font:normal bold 9.33px/10.73px 'Liberation Sans', sans-serif;color:#000;transform:scaleX(1.2068);transform-origin:50% 50%;-webkit-text-stroke:0.3px #000;">$36</span>
<div class="b" style="left:33px;top:477px;width:793px;height:14.3px;background:#868686;"></div>
<span class="t" style="left:127.00px;top:480.49px;font:normal bold 9.33px/10.73px 'Liberation Sans', sans-serif;color:#fff;transform:scaleX(1.1390);transform-origin:0 50%;-webkit-text-stroke:0.3px #fff;">Subtotal</span>
<span class="t" style="left:348.90px;top:480.49px;font:normal bold 9.33px/10.73px 'Liberation Sans', sans-serif;color:#fff;transform:scaleX(1.0763);transform-origin:50% 50%;-webkit-text-stroke:0.3px #fff;">0</span>
<span class="t" style="left:429.71px;top:480.49px;font:normal bold 9.33px/10.73px 'Liberation Sans', sans-serif;color:#fff;transform:scaleX(1.1747);transform-origin:50% 50%;-webkit-text-stroke:0.3px #fff;">$22</span>
<span class="t" style="left:515.71px;top:480.49px;font:normal bold 9.33px/10.73px 'Liberation Sans', sans-serif;color:#fff;transform:scaleX(1.1747);transform-origin:50% 50%;-webkit-text-stroke:0.3px #fff;">$70</span>
<span class="t" style="left:601.21px;top:480.49px;font:normal bold 9.33px/10.73px 'Liberation Sans', sans-serif;color:#fff;transform:scaleX(1.1747);transform-origin:50% 50%;-webkit-text-stroke:0.3px #fff;">$70</span>
<span class="t" style="left:687.21px;top:480.49px;font:normal bold 9.33px/10.73px 'Liberation Sans', sans-serif;color:#fff;transform:scaleX(1.1747);transform-origin:50% 50%;-webkit-text-stroke:0.3px #fff;">$70</span>
<span class="t" style="left:773.12px;top:480.49px;font:normal bold 9.33px/10.73px 'Liberation Sans', sans-serif;color:#fff;transform:scaleX(1.2039);transform-origin:50% 50%;-webkit-text-stroke:0.3px #fff;">$232</span>
<div class="b" style="left:33px;top:492px;width:793px;height:13px;background:#fafafa;"></div>
<span class="t" style="left:45.00px;top:494.49px;font:normal bold 9.33px/10.73px 'Liberation Sans', sans-serif;color:#000;transform:scaleX(1.1600);transform-origin:0 50%;-webkit-text-stroke:0.3px #000;">3</span>
<span class="t" style="left:127.00px;top:494.49px;font:normal bold 9.33px/10.73px 'Liberation Sans', sans-serif;color:#000;transform:scaleX(1.1555);transform-origin:0 50%;-webkit-text-stroke:0.3px #000;">Project Delivery</span>
<div class="b" style="left:33px;top:505px;width:82px;height:14px;background:#dedede;"></div>
<span class="t" style="left:45.00px;top:508.04px;font:normal normal 9.33px/10.73px 'Liberation Sans', sans-serif;color:#000;transform:scaleX(0.8300);transform-origin:0 50%;-webkit-text-stroke:0.12px #000;">3.1</span>
<span class="t" style="left:127.00px;top:508.04px;font:normal normal 9.33px/10.73px 'Liberation Sans', sans-serif;color:#000;letter-spacing:-0.136px;-webkit-text-stroke:0.12px #000;">Install System</span>
<span class="t" style="left:348.90px;top:508.04px;font:normal normal 9.33px/10.73px 'Liberation Sans', sans-serif;color:#000;transform:scaleX(0.9700);transform-origin:50% 50%;-webkit-text-stroke:0.12px #000;">0</span>
<span class="t" style="left:432.30px;top:508.04px;font:normal normal 9.33px/10.73px 'Liberation Sans', sans-serif;color:#000;transform:scaleX(0.9700);transform-origin:50% 50%;-webkit-text-stroke:0.12px #000;">$0</span>
<span class="t" style="left:518.30px;top:508.04px;font:normal normal 9.33px/10.73px 'Liberation Sans', sans-serif;color:#000;transform:scaleX(0.9700);transform-origin:50% 50%;-webkit-text-stroke:0.12px #000;">$0</span>
<span class="t" style="left:603.80px;top:508.04px;font:normal normal 9.33px/10.73px 'Liberation Sans', sans-serif;color:#000;transform:scaleX(0.9700);transform-origin:50% 50%;-webkit-text-stroke:0.12px #000;">$0</span>
<span class="t" style="left:689.80px;top:508.04px;font:normal normal 9.33px/10.73px 'Liberation Sans', sans-serif;color:#000;transform:scaleX(0.9700);transform-origin:50% 50%;-webkit-text-stroke:0.12px #000;">$0</span>
<span class="t" style="left:775.71px;top:508.49px;font:normal bold 9.33px/10.73px 'Liberation Sans', sans-serif;color:#000;transform:scaleX(1.0656);transform-origin:50% 50%;-webkit-text-stroke:0.3px #000;">$12</span>
<div class="b" style="left:33px;top:519px;width:82px;height:14px;background:#dedede;"></div>
<span class="t" style="left:45.00px;top:522.04px;font:normal normal 9.33px/10.73px 'Liberation Sans', sans-serif;color:#000;transform:scaleX(0.9400);transform-origin:0 50%;-webkit-text-stroke:0.12px #000;">3.2</span>
<span class="t" style="left:127.00px;top:522.04px;font:normal normal 9.33px/10.73px 'Liberation Sans', sans-serif;color:#000;letter-spacing:0.014px;-webkit-text-stroke:0.12px #000;">Train Customers</span>
<span class="t" style="left:348.90px;top:522.04px;font:normal normal 9.33px/10.73px 'Liberation Sans', sans-serif;color:#000;transform:scaleX(0.9700);transform-origin:50% 50%;-webkit-text-stroke:0.12px #000;">0</span>
<span class="t" style="left:432.30px;top:522.04px;font:normal normal 9.33px/10.73px 'Liberation Sans', sans-serif;color:#000;transform:scaleX(0.9700);transform-origin:50% 50%;-webkit-text-stroke:0.12px #000;">$0</span>
<span class="t" style="left:518.30px;top:522.04px;font:normal normal 9.33px/10.73px 'Liberation Sans', sans-serif;color:#000;transform:scaleX(0.9700);transform-origin:50% 50%;-webkit-text-stroke:0.12px #000;">$0</span>
<span class="t" style="left:603.80px;top:522.04px;font:normal normal 9.33px/10.73px 'Liberation Sans', sans-serif;color:#000;transform:scaleX(0.9700);transform-origin:50% 50%;-webkit-text-stroke:0.12px #000;">$0</span>
<span class="t" style="left:689.80px;top:522.04px;font:normal normal 9.33px/10.73px 'Liberation Sans', sans-serif;color:#000;transform:scaleX(0.9700);transform-origin:50% 50%;-webkit-text-stroke:0.12px #000;">$0</span>
<span class="t" style="left:778.30px;top:522.49px;font:normal bold 9.33px/10.73px 'Liberation Sans', sans-serif;color:#000;transform:scaleX(1.1838);transform-origin:50% 50%;-webkit-text-stroke:0.3px #000;">$0</span>
<div class="b" style="left:33px;top:533px;width:82px;height:14px;background:#dedede;"></div>
<span class="t" style="left:45.00px;top:536.04px;font:normal normal 9.33px/10.73px 'Liberation Sans', sans-serif;color:#000;transform:scaleX(0.9400);transform-origin:0 50%;-webkit-text-stroke:0.12px #000;">3.3</span>
<span class="t" style="left:127.00px;top:536.04px;font:normal normal 9.33px/10.73px 'Liberation Sans', sans-serif;color:#000;letter-spacing:0.171px;-webkit-text-stroke:0.12px #000;">Perform Acceptance Test</span>
<span class="t" style="left:348.90px;top:536.04px;font:normal normal 9.33px/10.73px 'Liberation Sans', sans-serif;color:#000;transform:scaleX(0.9700);transform-origin:50% 50%;-webkit-text-stroke:0.12px #000;">0</span>
<span class="t" style="left:432.30px;top:536.04px;font:normal normal 9.33px/10.73px 'Liberation Sans', sans-serif;color:#000;transform:scaleX(0.9700);transform-origin:50% 50%;-webkit-text-stroke:0.12px #000;">$0</span>
<span class="t" style="left:518.30px;top:536.04px;font:normal normal 9.33px/10.73px 'Liberation Sans', sans-serif;color:#000;transform:scaleX(0.9700);transform-origin:50% 50%;-webkit-text-stroke:0.12px #000;">$0</span>
<span class="t" style="left:603.80px;top:536.04px;font:normal normal 9.33px/10.73px 'Liberation Sans', sans-serif;color:#000;transform:scaleX(0.9700);transform-origin:50% 50%;-webkit-text-stroke:0.12px #000;">$0</span>
<span class="t" style="left:689.80px;top:536.04px;font:normal normal 9.33px/10.73px 'Liberation Sans', sans-serif;color:#000;transform:scaleX(0.9700);transform-origin:50% 50%;-webkit-text-stroke:0.12px #000;">$0</span>
<span class="t" style="left:778.30px;top:536.49px;font:normal bold 9.33px/10.73px 'Liberation Sans', sans-serif;color:#000;transform:scaleX(1.1838);transform-origin:50% 50%;-webkit-text-stroke:0.3px #000;">$0</span>
<div class="b" style="left:33px;top:547px;width:82px;height:14px;background:#dedede;"></div>
<span class="t" style="left:45.00px;top:550.04px;font:normal normal 9.33px/10.73px 'Liberation Sans', sans-serif;color:#000;transform:scaleX(0.9400);transform-origin:0 50%;-webkit-text-stroke:0.12px #000;">3.4</span>
<span class="t" style="left:127.00px;top:550.04px;font:normal normal 9.33px/10.73px 'Liberation Sans', sans-serif;color:#000;letter-spacing:0.118px;-webkit-text-stroke:0.12px #000;">Perform Post Project Review</span>
<span class="t" style="left:348.90px;top:550.04px;font:normal normal 9.33px/10.73px 'Liberation Sans', sans-serif;color:#000;transform:scaleX(0.9700);transform-origin:50% 50%;-webkit-text-stroke:0.12px #000;">0</span>
<span class="t" style="left:432.30px;top:550.04px;font:normal normal 9.33px/10.73px 'Liberation Sans', sans-serif;color:#000;transform:scaleX(0.9700);transform-origin:50% 50%;-webkit-text-stroke:0.12px #000;">$0</span>
<span class="t" style="left:518.30px;top:550.04px;font:normal normal 9.33px/10.73px 'Liberation Sans', sans-serif;color:#000;transform:scaleX(0.9700);transform-origin:50% 50%;-webkit-text-stroke:0.12px #000;">$0</span>
<span class="t" style="left:603.80px;top:550.04px;font:normal normal 9.33px/10.73px 'Liberation Sans', sans-serif;color:#000;transform:scaleX(0.9700);transform-origin:50% 50%;-webkit-text-stroke:0.12px #000;">$0</span>
<span class="t" style="left:689.80px;top:550.04px;font:normal normal 9.33px/10.73px 'Liberation Sans', sans-serif;color:#000;transform:scaleX(0.9700);transform-origin:50% 50%;-webkit-text-stroke:0.12px #000;">$0</span>
<span class="t" style="left:778.30px;top:550.49px;font:normal bold 9.33px/10.73px 'Liberation Sans', sans-serif;color:#000;transform:scaleX(1.1838);transform-origin:50% 50%;-webkit-text-stroke:0.3px #000;">$0</span>
<div class="b" style="left:33px;top:561px;width:82px;height:14px;background:#dedede;"></div>
<span class="t" style="left:45.00px;top:564.04px;font:normal normal 9.33px/10.73px 'Liberation Sans', sans-serif;color:#000;transform:scaleX(0.9400);transform-origin:0 50%;-webkit-text-stroke:0.12px #000;">3.5</span>
<span class="t" style="left:127.00px;top:564.04px;font:normal normal 9.33px/10.73px 'Liberation Sans', sans-serif;color:#000;letter-spacing:-0.073px;-webkit-text-stroke:0.12px #000;">Provide Warranty Support</span>
<span class="t" style="left:348.90px;top:564.04px;font:normal normal 9.33px/10.73px 'Liberation Sans', sans-serif;color:#000;transform:scaleX(0.9700);transform-origin:50% 50%;-webkit-text-stroke:0.12px #000;">0</span>
<span class="t" style="left:432.30px;top:564.04px;font:normal normal 9.33px/10.73px 'Liberation Sans', sans-serif;color:#000;transform:scaleX(0.9700);transform-origin:50% 50%;-webkit-text-stroke:0.12px #000;">$0</span>
<span class="t" style="left:518.30px;top:564.04px;font:normal normal 9.33px/10.73px 'Liberation Sans', sans-serif;color:#000;transform:scaleX(0.9700);transform-origin:50% 50%;-webkit-text-stroke:0.12px #000;">$0</span>
<span class="t" style="left:603.80px;top:564.04px;font:normal normal 9.33px/10.73px 'Liberation Sans', sans-serif;color:#000;transform:scaleX(0.9700);transform-origin:50% 50%;-webkit-text-stroke:0.12px #000;">$0</span>
<span class="t" style="left:689.80px;top:564.04px;font:normal normal 9.33px/10.73px 'Liberation Sans', sans-serif;color:#000;transform:scaleX(0.9700);transform-origin:50% 50%;-webkit-text-stroke:0.12px #000;">$0</span>
<span class="t" style="left:778.30px;top:564.49px;font:normal bold 9.33px/10.73px 'Liberation Sans', sans-serif;color:#000;transform:scaleX(1.1838);transform-origin:50% 50%;-webkit-text-stroke:0.3px #000;">$0</span>
<div class="b" style="left:33px;top:575px;width:82px;height:14px;background:#dedede;"></div>
<span class="t" style="left:45.00px;top:578.04px;font:normal normal 9.33px/10.73px 'Liberation Sans', sans-serif;color:#000;transform:scaleX(0.9400);transform-origin:0 50%;-webkit-text-stroke:0.12px #000;">3.6</span>
<span class="t" style="left:127.00px;top:578.04px;font:normal normal 9.33px/10.73px 'Liberation Sans', sans-serif;color:#000;letter-spacing:0.047px;-webkit-text-stroke:0.12px #000;">Archive Materials</span>
<span class="t" style="left:348.90px;top:578.04px;font:normal normal 9.33px/10.73px 'Liberation Sans', sans-serif;color:#000;transform:scaleX(0.9700);transform-origin:50% 50%;-webkit-text-stroke:0.12px #000;">0</span>
<span class="t" style="left:432.30px;top:578.04px;font:normal normal 9.33px/10.73px 'Liberation Sans', sans-serif;color:#000;transform:scaleX(0.9700);transform-origin:50% 50%;-webkit-text-stroke:0.12px #000;">$0</span>
<span class="t" style="left:518.30px;top:578.04px;font:normal normal 9.33px/10.73px 'Liberation Sans', sans-serif;color:#000;transform:scaleX(0.9700);transform-origin:50% 50%;-webkit-text-stroke:0.12px #000;">$0</span>
<span class="t" style="left:603.80px;top:578.04px;font:normal normal 9.33px/10.73px 'Liberation Sans', sans-serif;color:#000;transform:scaleX(0.9700);transform-origin:50% 50%;-webkit-text-stroke:0.12px #000;">$0</span>
<span class="t" style="left:689.80px;top:578.04px;font:normal normal 9.33px/10.73px 'Liberation Sans', sans-serif;color:#000;transform:scaleX(0.9700);transform-origin:50% 50%;-webkit-text-stroke:0.12px #000;">$0</span>
<span class="t" style="left:778.30px;top:578.49px;font:normal bold 9.33px/10.73px 'Liberation Sans', sans-serif;color:#000;transform:scaleX(1.1838);transform-origin:50% 50%;-webkit-text-stroke:0.3px #000;">$0</span>
<div class="b" style="left:33px;top:589px;width:793px;height:14.3px;background:#868686;"></div>
<span class="t" style="left:127.00px;top:592.49px;font:normal bold 9.33px/10.73px 'Liberation Sans', sans-serif;color:#fff;transform:scaleX(1.1390);transform-origin:0 50%;-webkit-text-stroke:0.3px #fff;">Subtotal</span>
<span class="t" style="left:348.90px;top:592.49px;font:normal bold 9.33px/10.73px 'Liberation Sans', sans-serif;color:#fff;transform:scaleX(1.0763);transform-origin:50% 50%;-webkit-text-stroke:0.3px #fff;">0</span>
<span class="t" style="left:432.30px;top:592.49px;font:normal bold 9.33px/10.73px 'Liberation Sans', sans-serif;color:#fff;transform:scaleX(1.1838);transform-origin:50% 50%;-webkit-text-stroke:0.3px #fff;">$0</span>
<span class="t" style="left:518.30px;top:592.49px;font:normal bold 9.33px/10.73px 'Liberation Sans', sans-serif;color:#fff;transform:scaleX(1.1838);transform-origin:50% 50%;-webkit-text-stroke:0.3px #fff;">$0</span>
<span class="t" style="left:603.80px;top:592.49px;font:normal bold 9.33px/10.73px 'Liberation Sans', sans-serif;color:#fff;transform:scaleX(1.1838);transform-origin:50% 50%;-webkit-text-stroke:0.3px #fff;">$0</span>
<span class="t" style="left:689.80px;top:592.49px;font:normal bold 9.33px/10.73px 'Liberation Sans', sans-serif;color:#fff;transform:scaleX(1.1838);transform-origin:50% 50%;-webkit-text-stroke:0.3px #fff;">$0</span>
<span class="t" style="left:775.71px;top:592.49px;font:normal bold 9.33px/10.73px 'Liberation Sans', sans-serif;color:#fff;transform:scaleX(1.0656);transform-origin:50% 50%;-webkit-text-stroke:0.3px #fff;">$12</span>
<div class="b" style="left:33px;top:604px;width:793px;height:13px;background:#fafafa;"></div>
<span class="t" style="left:45.00px;top:606.49px;font:normal bold 9.33px/10.73px 'Liberation Sans', sans-serif;color:#000;transform:scaleX(1.1600);transform-origin:0 50%;-webkit-text-stroke:0.3px #000;">9</span>
<span class="t" style="left:127.00px;top:606.49px;font:normal bold 9.33px/10.73px 'Liberation Sans', sans-serif;color:#000;transform:scaleX(1.1564);transform-origin:0 50%;-webkit-text-stroke:0.3px #000;">Project Management</span>
<div class="b" style="left:33px;top:617px;width:82px;height:14px;background:#dedede;"></div>
<span class="t" style="left:45.00px;top:620.04px;font:normal normal 9.33px/10.73px 'Liberation Sans', sans-serif;color:#000;transform:scaleX(0.8300);transform-origin:0 50%;-webkit-text-stroke:0.12px #000;">9.1</span>
<span class="t" style="left:127.00px;top:620.04px;font:normal normal 9.33px/10.73px 'Liberation Sans', sans-serif;color:#000;letter-spacing:0.114px;-webkit-text-stroke:0.12px #000;">Customer Progress Meetings/Reports</span>
<span class="t" style="left:348.90px;top:620.04px;font:normal normal 9.33px/10.73px 'Liberation Sans', sans-serif;color:#000;transform:scaleX(0.9700);transform-origin:50% 50%;-webkit-text-stroke:0.12px #000;">0</span>
<span class="t" style="left:432.30px;top:620.04px;font:normal normal 9.33px/10.73px 'Liberation Sans', sans-serif;color:#000;transform:scaleX(0.9700);transform-origin:50% 50%;-webkit-text-stroke:0.12px #000;">$0</span>
<span class="t" style="left:518.30px;top:620.04px;font:normal normal 9.33px/10.73px 'Liberation Sans', sans-serif;color:#000;transform:scaleX(0.9700);transform-origin:50% 50%;-webkit-text-stroke:0.12px #000;">$0</span>
<span class="t" style="left:603.80px;top:620.04px;font:normal normal 9.33px/10.73px 'Liberation Sans', sans-serif;color:#000;transform:scaleX(0.9700);transform-origin:50% 50%;-webkit-text-stroke:0.12px #000;">$0</span>
<span class="t" style="left:689.80px;top:620.04px;font:normal normal 9.33px/10.73px 'Liberation Sans', sans-serif;color:#000;transform:scaleX(0.9700);transform-origin:50% 50%;-webkit-text-stroke:0.12px #000;">$0</span>
<span class="t" style="left:775.71px;top:620.49px;font:normal bold 9.33px/10.73px 'Liberation Sans', sans-serif;color:#000;transform:scaleX(1.0656);transform-origin:50% 50%;-webkit-text-stroke:0.3px #000;">$12</span>
<div class="b" style="left:33px;top:631px;width:82px;height:14px;background:#dedede;"></div>
<span class="t" style="left:45.00px;top:634.04px;font:normal normal 9.33px/10.73px 'Liberation Sans', sans-serif;color:#000;transform:scaleX(0.9400);transform-origin:0 50%;-webkit-text-stroke:0.12px #000;">9.2</span>
<span class="t" style="left:127.00px;top:634.04px;font:normal normal 9.33px/10.73px 'Liberation Sans', sans-serif;color:#000;letter-spacing:0.014px;-webkit-text-stroke:0.12px #000;">Internal Status Meetings/Reports</span>
<span class="t" style="left:348.90px;top:634.04px;font:normal normal 9.33px/10.73px 'Liberation Sans', sans-serif;color:#000;transform:scaleX(0.9700);transform-origin:50% 50%;-webkit-text-stroke:0.12px #000;">0</span>
<span class="t" style="left:432.30px;top:634.04px;font:normal normal 9.33px/10.73px 'Liberation Sans', sans-serif;color:#000;transform:scaleX(0.9700);transform-origin:50% 50%;-webkit-text-stroke:0.12px #000;">$0</span>
<span class="t" style="left:518.30px;top:634.04px;font:normal normal 9.33px/10.73px 'Liberation Sans', sans-serif;color:#000;transform:scaleX(0.9700);transform-origin:50% 50%;-webkit-text-stroke:0.12px #000;">$0</span>
<span class="t" style="left:603.80px;top:634.04px;font:normal normal 9.33px/10.73px 'Liberation Sans', sans-serif;color:#000;transform:scaleX(0.9700);transform-origin:50% 50%;-webkit-text-stroke:0.12px #000;">$0</span>
<span class="t" style="left:689.80px;top:634.04px;font:normal normal 9.33px/10.73px 'Liberation Sans', sans-serif;color:#000;transform:scaleX(0.9700);transform-origin:50% 50%;-webkit-text-stroke:0.12px #000;">$0</span>
<span class="t" style="left:778.30px;top:634.49px;font:normal bold 9.33px/10.73px 'Liberation Sans', sans-serif;color:#000;transform:scaleX(1.1838);transform-origin:50% 50%;-webkit-text-stroke:0.3px #000;">$0</span>
<div class="b" style="left:33px;top:645px;width:82px;height:14px;background:#dedede;"></div>
<span class="t" style="left:45.00px;top:648.04px;font:normal normal 9.33px/10.73px 'Liberation Sans', sans-serif;color:#000;transform:scaleX(0.9400);transform-origin:0 50%;-webkit-text-stroke:0.12px #000;">9.3</span>
<span class="t" style="left:127.00px;top:648.04px;font:normal normal 9.33px/10.73px 'Liberation Sans', sans-serif;color:#000;letter-spacing:-0.070px;-webkit-text-stroke:0.12px #000;">Third-Party Vendor Interface</span>
<span class="t" style="left:348.90px;top:648.04px;font:normal normal 9.33px/10.73px 'Liberation Sans', sans-serif;color:#000;transform:scaleX(0.9700);transform-origin:50% 50%;-webkit-text-stroke:0.12px #000;">0</span>
<span class="t" style="left:432.30px;top:648.04px;font:normal normal 9.33px/10.73px 'Liberation Sans', sans-serif;color:#000;transform:scaleX(0.9700);transform-origin:50% 50%;-webkit-text-stroke:0.12px #000;">$0</span>
<span class="t" style="left:518.30px;top:648.04px;font:normal normal 9.33px/10.73px 'Liberation Sans', sans-serif;color:#000;transform:scaleX(0.9700);transform-origin:50% 50%;-webkit-text-stroke:0.12px #000;">$0</span>
<span class="t" style="left:603.80px;top:648.04px;font:normal normal 9.33px/10.73px 'Liberation Sans', sans-serif;color:#000;transform:scaleX(0.9700);transform-origin:50% 50%;-webkit-text-stroke:0.12px #000;">$0</span>
<span class="t" style="left:689.80px;top:648.04px;font:normal normal 9.33px/10.73px 'Liberation Sans', sans-serif;color:#000;transform:scaleX(0.9700);transform-origin:50% 50%;-webkit-text-stroke:0.12px #000;">$0</span>
<span class="t" style="left:778.30px;top:648.49px;font:normal bold 9.33px/10.73px 'Liberation Sans', sans-serif;color:#000;transform:scaleX(1.1838);transform-origin:50% 50%;-webkit-text-stroke:0.3px #000;">$0</span>
<div class="b" style="left:33px;top:659px;width:82px;height:14px;background:#dedede;"></div>
<span class="t" style="left:45.00px;top:662.04px;font:normal normal 9.33px/10.73px 'Liberation Sans', sans-serif;color:#000;transform:scaleX(0.9400);transform-origin:0 50%;-webkit-text-stroke:0.12px #000;">9.4</span>
<span class="t" style="left:127.00px;top:662.04px;font:normal normal 9.33px/10.73px 'Liberation Sans', sans-serif;color:#000;letter-spacing:-0.092px;-webkit-text-stroke:0.12px #000;">Interface to Other Internal Departments</span>
<span class="t" style="left:348.90px;top:662.04px;font:normal normal 9.33px/10.73px 'Liberation Sans', sans-serif;color:#000;transform:scaleX(0.9700);transform-origin:50% 50%;-webkit-text-stroke:0.12px #000;">0</span>
<span class="t" style="left:432.30px;top:662.04px;font:normal normal 9.33px/10.73px 'Liberation Sans', sans-serif;color:#000;transform:scaleX(0.9700);transform-origin:50% 50%;-webkit-text-stroke:0.12px #000;">$0</span>
<span class="t" style="left:518.30px;top:662.04px;font:normal normal 9.33px/10.73px 'Liberation Sans', sans-serif;color:#000;transform:scaleX(0.9700);transform-origin:50% 50%;-webkit-text-stroke:0.12px #000;">$0</span>
<span class="t" style="left:603.80px;top:662.04px;font:normal normal 9.33px/10.73px 'Liberation Sans', sans-serif;color:#000;transform:scaleX(0.9700);transform-origin:50% 50%;-webkit-text-stroke:0.12px #000;">$0</span>
<span class="t" style="left:689.80px;top:662.04px;font:normal normal 9.33px/10.73px 'Liberation Sans', sans-serif;color:#000;transform:scaleX(0.9700);transform-origin:50% 50%;-webkit-text-stroke:0.12px #000;">$0</span>
<span class="t" style="left:778.30px;top:662.49px;font:normal bold 9.33px/10.73px 'Liberation Sans', sans-serif;color:#000;transform:scaleX(1.1838);transform-origin:50% 50%;-webkit-text-stroke:0.3px #000;">$0</span>
<div class="b" style="left:33px;top:673px;width:82px;height:14px;background:#dedede;"></div>
<span class="t" style="left:45.00px;top:676.04px;font:normal normal 9.33px/10.73px 'Liberation Sans', sans-serif;color:#000;transform:scaleX(0.9400);transform-origin:0 50%;-webkit-text-stroke:0.12px #000;">9.5</span>
<span class="t" style="left:127.00px;top:676.04px;font:normal normal 9.33px/10.73px 'Liberation Sans', sans-serif;color:#000;letter-spacing:0.033px;-webkit-text-stroke:0.12px #000;">Configuration Management</span>
<span class="t" style="left:348.90px;top:676.04px;font:normal normal 9.33px/10.73px 'Liberation Sans', sans-serif;color:#000;transform:scaleX(0.9700);transform-origin:50% 50%;-webkit-text-stroke:0.12px #000;">0</span>
<span class="t" style="left:432.30px;top:676.04px;font:normal normal 9.33px/10.73px 'Liberation Sans', sans-serif;color:#000;transform:scaleX(0.9700);transform-origin:50% 50%;-webkit-text-stroke:0.12px #000;">$0</span>
<span class="t" style="left:518.30px;top:676.04px;font:normal normal 9.33px/10.73px 'Liberation Sans', sans-serif;color:#000;transform:scaleX(0.9700);transform-origin:50% 50%;-webkit-text-stroke:0.12px #000;">$0</span>
<span class="t" style="left:603.80px;top:676.04px;font:normal normal 9.33px/10.73px 'Liberation Sans', sans-serif;color:#000;transform:scaleX(0.9700);transform-origin:50% 50%;-webkit-text-stroke:0.12px #000;">$0</span>
<span class="t" style="left:689.80px;top:676.04px;font:normal normal 9.33px/10.73px 'Liberation Sans', sans-serif;color:#000;transform:scaleX(0.9700);transform-origin:50% 50%;-webkit-text-stroke:0.12px #000;">$0</span>
<span class="t" style="left:778.30px;top:676.49px;font:normal bold 9.33px/10.73px 'Liberation Sans', sans-serif;color:#000;transform:scaleX(1.1838);transform-origin:50% 50%;-webkit-text-stroke:0.3px #000;">$0</span>
<div class="b" style="left:33px;top:687px;width:82px;height:14px;background:#dedede;"></div>
<span class="t" style="left:45.00px;top:690.04px;font:normal normal 9.33px/10.73px 'Liberation Sans', sans-serif;color:#000;transform:scaleX(0.9400);transform-origin:0 50%;-webkit-text-stroke:0.12px #000;">9.6</span>
<span class="t" style="left:127.00px;top:690.04px;font:normal normal 9.33px/10.73px 'Liberation Sans', sans-serif;color:#000;letter-spacing:-0.055px;-webkit-text-stroke:0.12px #000;">Quality Assurance</span>
<span class="t" style="left:348.90px;top:690.04px;font:normal normal 9.33px/10.73px 'Liberation Sans', sans-serif;color:#000;transform:scaleX(0.9700);transform-origin:50% 50%;-webkit-text-stroke:0.12px #000;">0</span>
<span class="t" style="left:432.30px;top:690.04px;font:normal normal 9.33px/10.73px 'Liberation Sans', sans-serif;color:#000;transform:scaleX(0.9700);transform-origin:50% 50%;-webkit-text-stroke:0.12px #000;">$0</span>
<span class="t" style="left:518.30px;top:690.04px;font:normal normal 9.33px/10.73px 'Liberation Sans', sans-serif;color:#000;transform:scaleX(0.9700);transform-origin:50% 50%;-webkit-text-stroke:0.12px #000;">$0</span>
<span class="t" style="left:603.80px;top:690.04px;font:normal normal 9.33px/10.73px 'Liberation Sans', sans-serif;color:#000;transform:scaleX(0.9700);transform-origin:50% 50%;-webkit-text-stroke:0.12px #000;">$0</span>
<span class="t" style="left:689.80px;top:690.04px;font:normal normal 9.33px/10.73px 'Liberation Sans', sans-serif;color:#000;transform:scaleX(0.9700);transform-origin:50% 50%;-webkit-text-stroke:0.12px #000;">$0</span>
<span class="t" style="left:778.30px;top:690.49px;font:normal bold 9.33px/10.73px 'Liberation Sans', sans-serif;color:#000;transform:scaleX(1.1838);transform-origin:50% 50%;-webkit-text-stroke:0.3px #000;">$0</span>
<div class="b" style="left:33px;top:701px;width:82px;height:14px;background:#dedede;"></div>
<span class="t" style="left:45.00px;top:704.04px;font:normal normal 9.33px/10.73px 'Liberation Sans', sans-serif;color:#000;transform:scaleX(0.9400);transform-origin:0 50%;-webkit-text-stroke:0.12px #000;">9.7</span>
<span class="t" style="left:127.00px;top:704.04px;font:normal normal 9.33px/10.73px 'Liberation Sans', sans-serif;color:#000;letter-spacing:0.003px;-webkit-text-stroke:0.12px #000;">Overall Project Management</span>
<span class="t" style="left:348.90px;top:704.04px;font:normal normal 9.33px/10.73px 'Liberation Sans', sans-serif;color:#000;transform:scaleX(0.9700);transform-origin:50% 50%;-webkit-text-stroke:0.12px #000;">0</span>
<span class="t" style="left:432.30px;top:704.04px;font:normal normal 9.33px/10.73px 'Liberation Sans', sans-serif;color:#000;transform:scaleX(0.9700);transform-origin:50% 50%;-webkit-text-stroke:0.12px #000;">$0</span>
<span class="t" style="left:518.30px;top:704.04px;font:normal normal 9.33px/10.73px 'Liberation Sans', sans-serif;color:#000;transform:scaleX(0.9700);transform-origin:50% 50%;-webkit-text-stroke:0.12px #000;">$0</span>
<span class="t" style="left:603.80px;top:704.04px;font:normal normal 9.33px/10.73px 'Liberation Sans', sans-serif;color:#000;transform:scaleX(0.9700);transform-origin:50% 50%;-webkit-text-stroke:0.12px #000;">$0</span>
<span class="t" style="left:689.80px;top:704.04px;font:normal normal 9.33px/10.73px 'Liberation Sans', sans-serif;color:#000;transform:scaleX(0.9700);transform-origin:50% 50%;-webkit-text-stroke:0.12px #000;">$0</span>
<span class="t" style="left:778.30px;top:704.49px;font:normal bold 9.33px/10.73px 'Liberation Sans', sans-serif;color:#000;transform:scaleX(1.1838);transform-origin:50% 50%;-webkit-text-stroke:0.3px #000;">$0</span>
<div class="b" style="left:33px;top:715px;width:793px;height:14.3px;background:#868686;"></div>
<span class="t" style="left:127.00px;top:718.49px;font:normal bold 9.33px/10.73px 'Liberation Sans', sans-serif;color:#fff;transform:scaleX(1.1390);transform-origin:0 50%;-webkit-text-stroke:0.3px #fff;">Subtotal</span>
<span class="t" style="left:348.90px;top:718.49px;font:normal bold 9.33px/10.73px 'Liberation Sans', sans-serif;color:#fff;transform:scaleX(1.0763);transform-origin:50% 50%;-webkit-text-stroke:0.3px #fff;">0</span>
<span class="t" style="left:432.30px;top:718.49px;font:normal bold 9.33px/10.73px 'Liberation Sans', sans-serif;color:#fff;transform:scaleX(1.1838);transform-origin:50% 50%;-webkit-text-stroke:0.3px #fff;">$0</span>
<span class="t" style="left:518.30px;top:718.49px;font:normal bold 9.33px/10.73px 'Liberation Sans', sans-serif;color:#fff;transform:scaleX(1.1838);transform-origin:50% 50%;-webkit-text-stroke:0.3px #fff;">$0</span>
<span class="t" style="left:603.80px;top:718.49px;font:normal bold 9.33px/10.73px 'Liberation Sans', sans-serif;color:#fff;transform:scaleX(1.1838);transform-origin:50% 50%;-webkit-text-stroke:0.3px #fff;">$0</span>
<span class="t" style="left:689.80px;top:718.49px;font:normal bold 9.33px/10.73px 'Liberation Sans', sans-serif;color:#fff;transform:scaleX(1.1838);transform-origin:50% 50%;-webkit-text-stroke:0.3px #fff;">$0</span>
<span class="t" style="left:775.71px;top:718.49px;font:normal bold 9.33px/10.73px 'Liberation Sans', sans-serif;color:#fff;transform:scaleX(1.0656);transform-origin:50% 50%;-webkit-text-stroke:0.3px #fff;">$12</span>
<span class="t" style="left:45.00px;top:732.49px;font:normal bold 9.33px/10.73px 'Liberation Sans', sans-serif;color:#000;transform:scaleX(1.0908);transform-origin:0 50%;-webkit-text-stroke:0.3px #000;">10 - Other</span>
<span class="t" style="left:127.00px;top:732.04px;font:normal normal 9.33px/10.73px 'Liberation Sans', sans-serif;color:#000;letter-spacing:0.030px;-webkit-text-stroke:0.12px #000;">Other cost</span>
<span class="t" style="left:348.90px;top:732.04px;font:normal normal 9.33px/10.73px 'Liberation Sans', sans-serif;color:#000;transform:scaleX(0.9700);transform-origin:50% 50%;-webkit-text-stroke:0.12px #000;">0</span>
<span class="t" style="left:432.30px;top:732.04px;font:normal normal 9.33px/10.73px 'Liberation Sans', sans-serif;color:#000;transform:scaleX(0.9700);transform-origin:50% 50%;-webkit-text-stroke:0.12px #000;">$0</span>
<span class="t" style="left:518.30px;top:732.04px;font:normal normal 9.33px/10.73px 'Liberation Sans', sans-serif;color:#000;transform:scaleX(0.9700);transform-origin:50% 50%;-webkit-text-stroke:0.12px #000;">$0</span>
<span class="t" style="left:603.80px;top:732.04px;font:normal normal 9.33px/10.73px 'Liberation Sans', sans-serif;color:#000;transform:scaleX(0.9700);transform-origin:50% 50%;-webkit-text-stroke:0.12px #000;">$0</span>
<span class="t" style="left:689.80px;top:732.04px;font:normal normal 9.33px/10.73px 'Liberation Sans', sans-serif;color:#000;transform:scaleX(0.9700);transform-origin:50% 50%;-webkit-text-stroke:0.12px #000;">$0</span>
<span class="t" style="left:775.71px;top:732.49px;font:normal bold 9.33px/10.73px 'Liberation Sans', sans-serif;color:#000;transform:scaleX(1.0656);transform-origin:50% 50%;-webkit-text-stroke:0.3px #000;">$12</span>
<span class="t" style="left:45.00px;top:746.49px;font:normal bold 9.33px/10.73px 'Liberation Sans', sans-serif;color:#000;transform:scaleX(1.0574);transform-origin:0 50%;-webkit-text-stroke:0.3px #000;">11 - Other</span>
<span class="t" style="left:127.00px;top:746.04px;font:normal normal 9.33px/10.73px 'Liberation Sans', sans-serif;color:#000;letter-spacing:0.030px;-webkit-text-stroke:0.12px #000;">Other cost</span>
<span class="t" style="left:348.90px;top:746.04px;font:normal normal 9.33px/10.73px 'Liberation Sans', sans-serif;color:#000;transform:scaleX(0.9700);transform-origin:50% 50%;-webkit-text-stroke:0.12px #000;">0</span>
<span class="t" style="left:432.30px;top:746.04px;font:normal normal 9.33px/10.73px 'Liberation Sans', sans-serif;color:#000;transform:scaleX(0.9700);transform-origin:50% 50%;-webkit-text-stroke:0.12px #000;">$0</span>
<span class="t" style="left:518.30px;top:746.04px;font:normal normal 9.33px/10.73px 'Liberation Sans', sans-serif;color:#000;transform:scaleX(0.9700);transform-origin:50% 50%;-webkit-text-stroke:0.12px #000;">$0</span>
<span class="t" style="left:603.80px;top:746.04px;font:normal normal 9.33px/10.73px 'Liberation Sans', sans-serif;color:#000;transform:scaleX(0.9700);transform-origin:50% 50%;-webkit-text-stroke:0.12px #000;">$0</span>
<span class="t" style="left:689.80px;top:746.04px;font:normal normal 9.33px/10.73px 'Liberation Sans', sans-serif;color:#000;transform:scaleX(0.9700);transform-origin:50% 50%;-webkit-text-stroke:0.12px #000;">$0</span>
<span class="t" style="left:775.71px;top:746.49px;font:normal bold 9.33px/10.73px 'Liberation Sans', sans-serif;color:#000;transform:scaleX(1.0656);transform-origin:50% 50%;-webkit-text-stroke:0.3px #000;">$12</span>
<div class="b" style="left:33px;top:757px;width:793px;height:14.3px;background:#868686;"></div>
<span class="t" style="left:45.00px;top:760.49px;font:normal bold 9.33px/10.73px 'Liberation Sans', sans-serif;color:#000;transform:scaleX(1.1559);transform-origin:0 50%;-webkit-text-stroke:0.3px #000;">Sub-Totals:</span>
<span class="t" style="left:346.30px;top:760.49px;font:normal bold 9.33px/10.73px 'Liberation Sans', sans-serif;color:#000;transform:scaleX(1.0875);transform-origin:50% 50%;-webkit-text-stroke:0.3px #000;">30</span>
<span class="t" style="left:429.71px;top:760.49px;font:normal bold 9.33px/10.73px 'Liberation Sans', sans-serif;color:#000;transform:scaleX(1.1747);transform-origin:50% 50%;-webkit-text-stroke:0.3px #000;">$72</span>
<span class="t" style="left:513.12px;top:760.49px;font:normal bold 9.33px/10.73px 'Liberation Sans', sans-serif;color:#000;transform:scaleX(1.1798);transform-origin:50% 50%;-webkit-text-stroke:0.3px #000;">$120</span>
<span class="t" style="left:598.62px;top:760.49px;font:normal bold 9.33px/10.73px 'Liberation Sans', sans-serif;color:#000;transform:scaleX(1.1798);transform-origin:50% 50%;-webkit-text-stroke:0.3px #000;">$120</span>
<span class="t" style="left:684.62px;top:760.49px;font:normal bold 9.33px/10.73px 'Liberation Sans', sans-serif;color:#000;transform:scaleX(1.1798);transform-origin:50% 50%;-webkit-text-stroke:0.3px #000;">$120</span>
<span class="t" style="left:773.12px;top:760.49px;font:normal bold 9.33px/10.73px 'Liberation Sans', sans-serif;color:#000;transform:scaleX(1.2039);transform-origin:50% 50%;-webkit-text-stroke:0.3px #000;">$432</span>
<div class="b" style="left:33px;top:771px;width:274px;height:14px;background:#dedede;"></div>
<span class="t" style="left:45.00px;top:774.49px;font:normal bold 9.33px/10.73px 'Liberation Sans', sans-serif;color:#000;transform:scaleX(1.1350);transform-origin:0 50%;-webkit-text-stroke:0.3px #000;">Risk (Contingency):</span>
<span class="t" style="left:348.90px;top:774.04px;font:normal normal 9.33px/10.73px 'Liberation Sans', sans-serif;color:#000;transform:scaleX(0.9700);transform-origin:50% 50%;-webkit-text-stroke:0.12px #000;">0</span>
<span class="t" style="left:432.30px;top:774.04px;font:normal normal 9.33px/10.73px 'Liberation Sans', sans-serif;color:#000;transform:scaleX(0.9700);transform-origin:50% 50%;-webkit-text-stroke:0.12px #000;">$0</span>
<span class="t" style="left:518.30px;top:774.04px;font:normal normal 9.33px/10.73px 'Liberation Sans', sans-serif;color:#000;transform:scaleX(0.9700);transform-origin:50% 50%;-webkit-text-stroke:0.12px #000;">$0</span>
<span class="t" style="left:603.80px;top:774.04px;font:normal normal 9.33px/10.73px 'Liberation Sans', sans-serif;color:#000;transform:scaleX(0.9700);transform-origin:50% 50%;-webkit-text-stroke:0.12px #000;">$0</span>
<span class="t" style="left:689.80px;top:774.04px;font:normal normal 9.33px/10.73px 'Liberation Sans', sans-serif;color:#000;transform:scaleX(0.9700);transform-origin:50% 50%;-webkit-text-stroke:0.12px #000;">$0</span>
<span class="t" style="left:775.71px;top:774.49px;font:normal bold 9.33px/10.73px 'Liberation Sans', sans-serif;color:#000;transform:scaleX(1.0656);transform-origin:50% 50%;-webkit-text-stroke:0.3px #000;">$12</span>
<div class="b" style="left:33px;top:308.7px;width:793px;height:1px;background:#8f8f8f;"></div>
<div class="b" style="left:33px;top:295px;width:1px;height:14px;background:#a9a9a9;"></div>
<div class="b" style="left:115.3px;top:295px;width:1px;height:14px;background:#8f8f8f;"></div>
<div class="b" style="left:306.8px;top:295px;width:1px;height:14px;background:#8f8f8f;"></div>
<div class="b" style="left:394.8px;top:295px;width:1px;height:14px;background:#8f8f8f;"></div>
<div class="b" style="left:477.8px;top:295px;width:1px;height:14px;background:#8f8f8f;"></div>
<div class="b" style="left:567.8px;top:295px;width:1px;height:14px;background:#8f8f8f;"></div>
<div class="b" style="left:648.8px;top:295px;width:1px;height:14px;background:#8f8f8f;"></div>
<div class="b" style="left:739.8px;top:295px;width:1px;height:14px;background:#8f8f8f;"></div>
<div class="b" style="left:825.5px;top:295px;width:1px;height:14px;background:#a9a9a9;"></div>
<div class="b" style="left:33px;top:322.7px;width:793px;height:1px;background:#8f8f8f;"></div>
<div class="b" style="left:33px;top:309px;width:1px;height:14px;background:#a9a9a9;"></div>
<div class="b" style="left:115.3px;top:309px;width:1px;height:14px;background:#8f8f8f;"></div>
<div class="b" style="left:306.8px;top:309px;width:1px;height:14px;background:#8f8f8f;"></div>
<div class="b" style="left:394.8px;top:309px;width:1px;height:14px;background:#8f8f8f;"></div>
<div class="b" style="left:477.8px;top:309px;width:1px;height:14px;background:#8f8f8f;"></div>
<div class="b" style="left:567.8px;top:309px;width:1px;height:14px;background:#8f8f8f;"></div>
<div class="b" style="left:648.8px;top:309px;width:1px;height:14px;background:#8f8f8f;"></div>
<div class="b" style="left:739.8px;top:309px;width:1px;height:14px;background:#8f8f8f;"></div>
<div class="b" style="left:825.5px;top:309px;width:1px;height:14px;background:#a9a9a9;"></div>
<div class="b" style="left:33px;top:336.7px;width:793px;height:1px;background:#8f8f8f;"></div>
<div class="b" style="left:33px;top:323px;width:1px;height:14px;background:#a9a9a9;"></div>
<div class="b" style="left:115.3px;top:323px;width:1px;height:14px;background:#8f8f8f;"></div>
<div class="b" style="left:306.8px;top:323px;width:1px;height:14px;background:#8f8f8f;"></div>
<div class="b" style="left:394.8px;top:323px;width:1px;height:14px;background:#8f8f8f;"></div>
<div class="b" style="left:477.8px;top:323px;width:1px;height:14px;background:#8f8f8f;"></div>
<div class="b" style="left:567.8px;top:323px;width:1px;height:14px;background:#8f8f8f;"></div>
<div class="b" style="left:648.8px;top:323px;width:1px;height:14px;background:#8f8f8f;"></div>
<div class="b" style="left:739.8px;top:323px;width:1px;height:14px;background:#8f8f8f;"></div>
<div class="b" style="left:825.5px;top:323px;width:1px;height:14px;background:#a9a9a9;"></div>
<div class="b" style="left:33px;top:350.7px;width:793px;height:1px;background:#8f8f8f;"></div>
<div class="b" style="left:33px;top:337px;width:1px;height:14px;background:#a9a9a9;"></div>
<div class="b" style="left:115.3px;top:337px;width:1px;height:14px;background:#8f8f8f;"></div>
<div class="b" style="left:306.8px;top:337px;width:1px;height:14px;background:#8f8f8f;"></div>
<div class="b" style="left:394.8px;top:337px;width:1px;height:14px;background:#8f8f8f;"></div>
<div class="b" style="left:477.8px;top:337px;width:1px;height:14px;background:#8f8f8f;"></div>
<div class="b" style="left:567.8px;top:337px;width:1px;height:14px;background:#8f8f8f;"></div>
<div class="b" style="left:648.8px;top:337px;width:1px;height:14px;background:#8f8f8f;"></div>
<div class="b" style="left:739.8px;top:337px;width:1px;height:14px;background:#8f8f8f;"></div>
<div class="b" style="left:825.5px;top:337px;width:1px;height:14px;background:#a9a9a9;"></div>
<div class="b" style="left:33px;top:364.7px;width:793px;height:1px;background:#8f8f8f;"></div>
<div class="b" style="left:33px;top:351px;width:1px;height:14px;background:#a9a9a9;"></div>
<div class="b" style="left:115.3px;top:351px;width:1px;height:14px;background:#8f8f8f;"></div>
<div class="b" style="left:306.8px;top:351px;width:1px;height:14px;background:#8f8f8f;"></div>
<div class="b" style="left:394.8px;top:351px;width:1px;height:14px;background:#8f8f8f;"></div>
<div class="b" style="left:477.8px;top:351px;width:1px;height:14px;background:#8f8f8f;"></div>
<div class="b" style="left:567.8px;top:351px;width:1px;height:14px;background:#8f8f8f;"></div>
<div class="b" style="left:648.8px;top:351px;width:1px;height:14px;background:#8f8f8f;"></div>
<div class="b" style="left:739.8px;top:351px;width:1px;height:14px;background:#8f8f8f;"></div>
<div class="b" style="left:825.5px;top:351px;width:1px;height:14px;background:#a9a9a9;"></div>
<div class="b" style="left:33px;top:378.7px;width:793px;height:1px;background:#8f8f8f;"></div>
<div class="b" style="left:33px;top:365px;width:1px;height:14px;background:#a9a9a9;"></div>
<div class="b" style="left:115.3px;top:365px;width:1px;height:14px;background:#8f8f8f;"></div>
<div class="b" style="left:306.8px;top:365px;width:1px;height:14px;background:#8f8f8f;"></div>
<div class="b" style="left:394.8px;top:365px;width:1px;height:14px;background:#8f8f8f;"></div>
<div class="b" style="left:477.8px;top:365px;width:1px;height:14px;background:#8f8f8f;"></div>
<div class="b" style="left:567.8px;top:365px;width:1px;height:14px;background:#8f8f8f;"></div>
<div class="b" style="left:648.8px;top:365px;width:1px;height:14px;background:#8f8f8f;"></div>
<div class="b" style="left:739.8px;top:365px;width:1px;height:14px;background:#8f8f8f;"></div>
<div class="b" style="left:825.5px;top:365px;width:1px;height:14px;background:#a9a9a9;"></div>
<div class="b" style="left:33px;top:406.7px;width:793px;height:1px;background:#8f8f8f;"></div>
<div class="b" style="left:33px;top:393px;width:1px;height:14px;background:#a9a9a9;"></div>
<div class="b" style="left:115.3px;top:393px;width:1px;height:14px;background:#8f8f8f;"></div>
<div class="b" style="left:306.8px;top:393px;width:1px;height:14px;background:#8f8f8f;"></div>
<div class="b" style="left:394.8px;top:393px;width:1px;height:14px;background:#8f8f8f;"></div>
<div class="b" style="left:477.8px;top:393px;width:1px;height:14px;background:#8f8f8f;"></div>
<div class="b" style="left:567.8px;top:393px;width:1px;height:14px;background:#8f8f8f;"></div>
<div class="b" style="left:648.8px;top:393px;width:1px;height:14px;background:#8f8f8f;"></div>
<div class="b" style="left:739.8px;top:393px;width:1px;height:14px;background:#8f8f8f;"></div>
<div class="b" style="left:825.5px;top:393px;width:1px;height:14px;background:#a9a9a9;"></div>
<div class="b" style="left:33px;top:420.7px;width:793px;height:1px;background:#8f8f8f;"></div>
<div class="b" style="left:33px;top:407px;width:1px;height:14px;background:#a9a9a9;"></div>
<div class="b" style="left:115.3px;top:407px;width:1px;height:14px;background:#8f8f8f;"></div>
<div class="b" style="left:306.8px;top:407px;width:1px;height:14px;background:#8f8f8f;"></div>
<div class="b" style="left:394.8px;top:407px;width:1px;height:14px;background:#8f8f8f;"></div>
<div class="b" style="left:477.8px;top:407px;width:1px;height:14px;background:#8f8f8f;"></div>
<div class="b" style="left:567.8px;top:407px;width:1px;height:14px;background:#8f8f8f;"></div>
<div class="b" style="left:648.8px;top:407px;width:1px;height:14px;background:#8f8f8f;"></div>
<div class="b" style="left:739.8px;top:407px;width:1px;height:14px;background:#8f8f8f;"></div>
<div class="b" style="left:825.5px;top:407px;width:1px;height:14px;background:#a9a9a9;"></div>
<div class="b" style="left:33px;top:434.7px;width:793px;height:1px;background:#8f8f8f;"></div>
<div class="b" style="left:33px;top:421px;width:1px;height:14px;background:#a9a9a9;"></div>
<div class="b" style="left:115.3px;top:421px;width:1px;height:14px;background:#8f8f8f;"></div>
<div class="b" style="left:306.8px;top:421px;width:1px;height:14px;background:#8f8f8f;"></div>
<div class="b" style="left:394.8px;top:421px;width:1px;height:14px;background:#8f8f8f;"></div>
<div class="b" style="left:477.8px;top:421px;width:1px;height:14px;background:#8f8f8f;"></div>
<div class="b" style="left:567.8px;top:421px;width:1px;height:14px;background:#8f8f8f;"></div>
<div class="b" style="left:648.8px;top:421px;width:1px;height:14px;background:#8f8f8f;"></div>
<div class="b" style="left:739.8px;top:421px;width:1px;height:14px;background:#8f8f8f;"></div>
<div class="b" style="left:825.5px;top:421px;width:1px;height:14px;background:#a9a9a9;"></div>
<div class="b" style="left:33px;top:448.7px;width:793px;height:1px;background:#8f8f8f;"></div>
<div class="b" style="left:33px;top:435px;width:1px;height:14px;background:#a9a9a9;"></div>
<div class="b" style="left:115.3px;top:435px;width:1px;height:14px;background:#8f8f8f;"></div>
<div class="b" style="left:306.8px;top:435px;width:1px;height:14px;background:#8f8f8f;"></div>
<div class="b" style="left:394.8px;top:435px;width:1px;height:14px;background:#8f8f8f;"></div>
<div class="b" style="left:477.8px;top:435px;width:1px;height:14px;background:#8f8f8f;"></div>
<div class="b" style="left:567.8px;top:435px;width:1px;height:14px;background:#8f8f8f;"></div>
<div class="b" style="left:648.8px;top:435px;width:1px;height:14px;background:#8f8f8f;"></div>
<div class="b" style="left:739.8px;top:435px;width:1px;height:14px;background:#8f8f8f;"></div>
<div class="b" style="left:825.5px;top:435px;width:1px;height:14px;background:#a9a9a9;"></div>
<div class="b" style="left:33px;top:462.7px;width:793px;height:1px;background:#8f8f8f;"></div>
<div class="b" style="left:33px;top:449px;width:1px;height:14px;background:#a9a9a9;"></div>
<div class="b" style="left:115.3px;top:449px;width:1px;height:14px;background:#8f8f8f;"></div>
<div class="b" style="left:306.8px;top:449px;width:1px;height:14px;background:#8f8f8f;"></div>
<div class="b" style="left:394.8px;top:449px;width:1px;height:14px;background:#8f8f8f;"></div>
<div class="b" style="left:477.8px;top:449px;width:1px;height:14px;background:#8f8f8f;"></div>
<div class="b" style="left:567.8px;top:449px;width:1px;height:14px;background:#8f8f8f;"></div>
<div class="b" style="left:648.8px;top:449px;width:1px;height:14px;background:#8f8f8f;"></div>
<div class="b" style="left:739.8px;top:449px;width:1px;height:14px;background:#8f8f8f;"></div>
<div class="b" style="left:825.5px;top:449px;width:1px;height:14px;background:#a9a9a9;"></div>
<div class="b" style="left:33px;top:476.7px;width:793px;height:1px;background:#8f8f8f;"></div>
<div class="b" style="left:33px;top:463px;width:1px;height:14px;background:#a9a9a9;"></div>
<div class="b" style="left:115.3px;top:463px;width:1px;height:14px;background:#8f8f8f;"></div>
<div class="b" style="left:306.8px;top:463px;width:1px;height:14px;background:#8f8f8f;"></div>
<div class="b" style="left:394.8px;top:463px;width:1px;height:14px;background:#8f8f8f;"></div>
<div class="b" style="left:477.8px;top:463px;width:1px;height:14px;background:#8f8f8f;"></div>
<div class="b" style="left:567.8px;top:463px;width:1px;height:14px;background:#8f8f8f;"></div>
<div class="b" style="left:648.8px;top:463px;width:1px;height:14px;background:#8f8f8f;"></div>
<div class="b" style="left:739.8px;top:463px;width:1px;height:14px;background:#8f8f8f;"></div>
<div class="b" style="left:825.5px;top:463px;width:1px;height:14px;background:#a9a9a9;"></div>
<div class="b" style="left:33px;top:504.7px;width:793px;height:1px;background:#8f8f8f;"></div>
<div class="b" style="left:33px;top:491px;width:1px;height:14px;background:#a9a9a9;"></div>
<div class="b" style="left:115.3px;top:491px;width:1px;height:14px;background:#8f8f8f;"></div>
<div class="b" style="left:306.8px;top:491px;width:1px;height:14px;background:#8f8f8f;"></div>
<div class="b" style="left:394.8px;top:491px;width:1px;height:14px;background:#8f8f8f;"></div>
<div class="b" style="left:477.8px;top:491px;width:1px;height:14px;background:#8f8f8f;"></div>
<div class="b" style="left:567.8px;top:491px;width:1px;height:14px;background:#8f8f8f;"></div>
<div class="b" style="left:648.8px;top:491px;width:1px;height:14px;background:#8f8f8f;"></div>
<div class="b" style="left:739.8px;top:491px;width:1px;height:14px;background:#8f8f8f;"></div>
<div class="b" style="left:825.5px;top:491px;width:1px;height:14px;background:#a9a9a9;"></div>
<div class="b" style="left:33px;top:518.7px;width:793px;height:1px;background:#8f8f8f;"></div>
<div class="b" style="left:33px;top:505px;width:1px;height:14px;background:#a9a9a9;"></div>
<div class="b" style="left:115.3px;top:505px;width:1px;height:14px;background:#8f8f8f;"></div>
<div class="b" style="left:306.8px;top:505px;width:1px;height:14px;background:#8f8f8f;"></div>
<div class="b" style="left:394.8px;top:505px;width:1px;height:14px;background:#8f8f8f;"></div>
<div class="b" style="left:477.8px;top:505px;width:1px;height:14px;background:#8f8f8f;"></div>
<div class="b" style="left:567.8px;top:505px;width:1px;height:14px;background:#8f8f8f;"></div>
<div class="b" style="left:648.8px;top:505px;width:1px;height:14px;background:#8f8f8f;"></div>
<div class="b" style="left:739.8px;top:505px;width:1px;height:14px;background:#8f8f8f;"></div>
<div class="b" style="left:825.5px;top:505px;width:1px;height:14px;background:#a9a9a9;"></div>
<div class="b" style="left:33px;top:532.7px;width:793px;height:1px;background:#8f8f8f;"></div>
<div class="b" style="left:33px;top:519px;width:1px;height:14px;background:#a9a9a9;"></div>
<div class="b" style="left:115.3px;top:519px;width:1px;height:14px;background:#8f8f8f;"></div>
<div class="b" style="left:306.8px;top:519px;width:1px;height:14px;background:#8f8f8f;"></div>
<div class="b" style="left:394.8px;top:519px;width:1px;height:14px;background:#8f8f8f;"></div>
<div class="b" style="left:477.8px;top:519px;width:1px;height:14px;background:#8f8f8f;"></div>
<div class="b" style="left:567.8px;top:519px;width:1px;height:14px;background:#8f8f8f;"></div>
<div class="b" style="left:648.8px;top:519px;width:1px;height:14px;background:#8f8f8f;"></div>
<div class="b" style="left:739.8px;top:519px;width:1px;height:14px;background:#8f8f8f;"></div>
<div class="b" style="left:825.5px;top:519px;width:1px;height:14px;background:#a9a9a9;"></div>
<div class="b" style="left:33px;top:546.7px;width:793px;height:1px;background:#8f8f8f;"></div>
<div class="b" style="left:33px;top:533px;width:1px;height:14px;background:#a9a9a9;"></div>
<div class="b" style="left:115.3px;top:533px;width:1px;height:14px;background:#8f8f8f;"></div>
<div class="b" style="left:306.8px;top:533px;width:1px;height:14px;background:#8f8f8f;"></div>
<div class="b" style="left:394.8px;top:533px;width:1px;height:14px;background:#8f8f8f;"></div>
<div class="b" style="left:477.8px;top:533px;width:1px;height:14px;background:#8f8f8f;"></div>
<div class="b" style="left:567.8px;top:533px;width:1px;height:14px;background:#8f8f8f;"></div>
<div class="b" style="left:648.8px;top:533px;width:1px;height:14px;background:#8f8f8f;"></div>
<div class="b" style="left:739.8px;top:533px;width:1px;height:14px;background:#8f8f8f;"></div>
<div class="b" style="left:825.5px;top:533px;width:1px;height:14px;background:#a9a9a9;"></div>
<div class="b" style="left:33px;top:560.7px;width:793px;height:1px;background:#8f8f8f;"></div>
<div class="b" style="left:33px;top:547px;width:1px;height:14px;background:#a9a9a9;"></div>
<div class="b" style="left:115.3px;top:547px;width:1px;height:14px;background:#8f8f8f;"></div>
<div class="b" style="left:306.8px;top:547px;width:1px;height:14px;background:#8f8f8f;"></div>
<div class="b" style="left:394.8px;top:547px;width:1px;height:14px;background:#8f8f8f;"></div>
<div class="b" style="left:477.8px;top:547px;width:1px;height:14px;background:#8f8f8f;"></div>
<div class="b" style="left:567.8px;top:547px;width:1px;height:14px;background:#8f8f8f;"></div>
<div class="b" style="left:648.8px;top:547px;width:1px;height:14px;background:#8f8f8f;"></div>
<div class="b" style="left:739.8px;top:547px;width:1px;height:14px;background:#8f8f8f;"></div>
<div class="b" style="left:825.5px;top:547px;width:1px;height:14px;background:#a9a9a9;"></div>
<div class="b" style="left:33px;top:574.7px;width:793px;height:1px;background:#8f8f8f;"></div>
<div class="b" style="left:33px;top:561px;width:1px;height:14px;background:#a9a9a9;"></div>
<div class="b" style="left:115.3px;top:561px;width:1px;height:14px;background:#8f8f8f;"></div>
<div class="b" style="left:306.8px;top:561px;width:1px;height:14px;background:#8f8f8f;"></div>
<div class="b" style="left:394.8px;top:561px;width:1px;height:14px;background:#8f8f8f;"></div>
<div class="b" style="left:477.8px;top:561px;width:1px;height:14px;background:#8f8f8f;"></div>
<div class="b" style="left:567.8px;top:561px;width:1px;height:14px;background:#8f8f8f;"></div>
<div class="b" style="left:648.8px;top:561px;width:1px;height:14px;background:#8f8f8f;"></div>
<div class="b" style="left:739.8px;top:561px;width:1px;height:14px;background:#8f8f8f;"></div>
<div class="b" style="left:825.5px;top:561px;width:1px;height:14px;background:#a9a9a9;"></div>
<div class="b" style="left:33px;top:588.7px;width:793px;height:1px;background:#8f8f8f;"></div>
<div class="b" style="left:33px;top:575px;width:1px;height:14px;background:#a9a9a9;"></div>
<div class="b" style="left:115.3px;top:575px;width:1px;height:14px;background:#8f8f8f;"></div>
<div class="b" style="left:306.8px;top:575px;width:1px;height:14px;background:#8f8f8f;"></div>
<div class="b" style="left:394.8px;top:575px;width:1px;height:14px;background:#8f8f8f;"></div>
<div class="b" style="left:477.8px;top:575px;width:1px;height:14px;background:#8f8f8f;"></div>
<div class="b" style="left:567.8px;top:575px;width:1px;height:14px;background:#8f8f8f;"></div>
<div class="b" style="left:648.8px;top:575px;width:1px;height:14px;background:#8f8f8f;"></div>
<div class="b" style="left:739.8px;top:575px;width:1px;height:14px;background:#8f8f8f;"></div>
<div class="b" style="left:825.5px;top:575px;width:1px;height:14px;background:#a9a9a9;"></div>
<div class="b" style="left:33px;top:616.7px;width:793px;height:1px;background:#8f8f8f;"></div>
<div class="b" style="left:33px;top:603px;width:1px;height:14px;background:#a9a9a9;"></div>
<div class="b" style="left:115.3px;top:603px;width:1px;height:14px;background:#8f8f8f;"></div>
<div class="b" style="left:306.8px;top:603px;width:1px;height:14px;background:#8f8f8f;"></div>
<div class="b" style="left:394.8px;top:603px;width:1px;height:14px;background:#8f8f8f;"></div>
<div class="b" style="left:477.8px;top:603px;width:1px;height:14px;background:#8f8f8f;"></div>
<div class="b" style="left:567.8px;top:603px;width:1px;height:14px;background:#8f8f8f;"></div>
<div class="b" style="left:648.8px;top:603px;width:1px;height:14px;background:#8f8f8f;"></div>
<div class="b" style="left:739.8px;top:603px;width:1px;height:14px;background:#8f8f8f;"></div>
<div class="b" style="left:825.5px;top:603px;width:1px;height:14px;background:#a9a9a9;"></div>
<div class="b" style="left:33px;top:630.7px;width:793px;height:1px;background:#8f8f8f;"></div>
<div class="b" style="left:33px;top:617px;width:1px;height:14px;background:#a9a9a9;"></div>
<div class="b" style="left:115.3px;top:617px;width:1px;height:14px;background:#8f8f8f;"></div>
<div class="b" style="left:306.8px;top:617px;width:1px;height:14px;background:#8f8f8f;"></div>
<div class="b" style="left:394.8px;top:617px;width:1px;height:14px;background:#8f8f8f;"></div>
<div class="b" style="left:477.8px;top:617px;width:1px;height:14px;background:#8f8f8f;"></div>
<div class="b" style="left:567.8px;top:617px;width:1px;height:14px;background:#8f8f8f;"></div>
<div class="b" style="left:648.8px;top:617px;width:1px;height:14px;background:#8f8f8f;"></div>
<div class="b" style="left:739.8px;top:617px;width:1px;height:14px;background:#8f8f8f;"></div>
<div class="b" style="left:825.5px;top:617px;width:1px;height:14px;background:#a9a9a9;"></div>
<div class="b" style="left:33px;top:644.7px;width:793px;height:1px;background:#8f8f8f;"></div>
<div class="b" style="left:33px;top:631px;width:1px;height:14px;background:#a9a9a9;"></div>
<div class="b" style="left:115.3px;top:631px;width:1px;height:14px;background:#8f8f8f;"></div>
<div class="b" style="left:306.8px;top:631px;width:1px;height:14px;background:#8f8f8f;"></div>
<div class="b" style="left:394.8px;top:631px;width:1px;height:14px;background:#8f8f8f;"></div>
<div class="b" style="left:477.8px;top:631px;width:1px;height:14px;background:#8f8f8f;"></div>
<div class="b" style="left:567.8px;top:631px;width:1px;height:14px;background:#8f8f8f;"></div>
<div class="b" style="left:648.8px;top:631px;width:1px;height:14px;background:#8f8f8f;"></div>
<div class="b" style="left:739.8px;top:631px;width:1px;height:14px;background:#8f8f8f;"></div>
<div class="b" style="left:825.5px;top:631px;width:1px;height:14px;background:#a9a9a9;"></div>
<div class="b" style="left:33px;top:658.7px;width:793px;height:1px;background:#8f8f8f;"></div>
<div class="b" style="left:33px;top:645px;width:1px;height:14px;background:#a9a9a9;"></div>
<div class="b" style="left:115.3px;top:645px;width:1px;height:14px;background:#8f8f8f;"></div>
<div class="b" style="left:306.8px;top:645px;width:1px;height:14px;background:#8f8f8f;"></div>
<div class="b" style="left:394.8px;top:645px;width:1px;height:14px;background:#8f8f8f;"></div>
<div class="b" style="left:477.8px;top:645px;width:1px;height:14px;background:#8f8f8f;"></div>
<div class="b" style="left:567.8px;top:645px;width:1px;height:14px;background:#8f8f8f;"></div>
<div class="b" style="left:648.8px;top:645px;width:1px;height:14px;background:#8f8f8f;"></div>
<div class="b" style="left:739.8px;top:645px;width:1px;height:14px;background:#8f8f8f;"></div>
<div class="b" style="left:825.5px;top:645px;width:1px;height:14px;background:#a9a9a9;"></div>
<div class="b" style="left:33px;top:672.7px;width:793px;height:1px;background:#8f8f8f;"></div>
<div class="b" style="left:33px;top:659px;width:1px;height:14px;background:#a9a9a9;"></div>
<div class="b" style="left:115.3px;top:659px;width:1px;height:14px;background:#8f8f8f;"></div>
<div class="b" style="left:306.8px;top:659px;width:1px;height:14px;background:#8f8f8f;"></div>
<div class="b" style="left:394.8px;top:659px;width:1px;height:14px;background:#8f8f8f;"></div>
<div class="b" style="left:477.8px;top:659px;width:1px;height:14px;background:#8f8f8f;"></div>
<div class="b" style="left:567.8px;top:659px;width:1px;height:14px;background:#8f8f8f;"></div>
<div class="b" style="left:648.8px;top:659px;width:1px;height:14px;background:#8f8f8f;"></div>
<div class="b" style="left:739.8px;top:659px;width:1px;height:14px;background:#8f8f8f;"></div>
<div class="b" style="left:825.5px;top:659px;width:1px;height:14px;background:#a9a9a9;"></div>
<div class="b" style="left:33px;top:686.7px;width:793px;height:1px;background:#8f8f8f;"></div>
<div class="b" style="left:33px;top:673px;width:1px;height:14px;background:#a9a9a9;"></div>
<div class="b" style="left:115.3px;top:673px;width:1px;height:14px;background:#8f8f8f;"></div>
<div class="b" style="left:306.8px;top:673px;width:1px;height:14px;background:#8f8f8f;"></div>
<div class="b" style="left:394.8px;top:673px;width:1px;height:14px;background:#8f8f8f;"></div>
<div class="b" style="left:477.8px;top:673px;width:1px;height:14px;background:#8f8f8f;"></div>
<div class="b" style="left:567.8px;top:673px;width:1px;height:14px;background:#8f8f8f;"></div>
<div class="b" style="left:648.8px;top:673px;width:1px;height:14px;background:#8f8f8f;"></div>
<div class="b" style="left:739.8px;top:673px;width:1px;height:14px;background:#8f8f8f;"></div>
<div class="b" style="left:825.5px;top:673px;width:1px;height:14px;background:#a9a9a9;"></div>
<div class="b" style="left:33px;top:700.7px;width:793px;height:1px;background:#8f8f8f;"></div>
<div class="b" style="left:33px;top:687px;width:1px;height:14px;background:#a9a9a9;"></div>
<div class="b" style="left:115.3px;top:687px;width:1px;height:14px;background:#8f8f8f;"></div>
<div class="b" style="left:306.8px;top:687px;width:1px;height:14px;background:#8f8f8f;"></div>
<div class="b" style="left:394.8px;top:687px;width:1px;height:14px;background:#8f8f8f;"></div>
<div class="b" style="left:477.8px;top:687px;width:1px;height:14px;background:#8f8f8f;"></div>
<div class="b" style="left:567.8px;top:687px;width:1px;height:14px;background:#8f8f8f;"></div>
<div class="b" style="left:648.8px;top:687px;width:1px;height:14px;background:#8f8f8f;"></div>
<div class="b" style="left:739.8px;top:687px;width:1px;height:14px;background:#8f8f8f;"></div>
<div class="b" style="left:825.5px;top:687px;width:1px;height:14px;background:#a9a9a9;"></div>
<div class="b" style="left:33px;top:714.7px;width:793px;height:1px;background:#8f8f8f;"></div>
<div class="b" style="left:33px;top:701px;width:1px;height:14px;background:#a9a9a9;"></div>
<div class="b" style="left:115.3px;top:701px;width:1px;height:14px;background:#8f8f8f;"></div>
<div class="b" style="left:306.8px;top:701px;width:1px;height:14px;background:#8f8f8f;"></div>
<div class="b" style="left:394.8px;top:701px;width:1px;height:14px;background:#8f8f8f;"></div>
<div class="b" style="left:477.8px;top:701px;width:1px;height:14px;background:#8f8f8f;"></div>
<div class="b" style="left:567.8px;top:701px;width:1px;height:14px;background:#8f8f8f;"></div>
<div class="b" style="left:648.8px;top:701px;width:1px;height:14px;background:#8f8f8f;"></div>
<div class="b" style="left:739.8px;top:701px;width:1px;height:14px;background:#8f8f8f;"></div>
<div class="b" style="left:825.5px;top:701px;width:1px;height:14px;background:#a9a9a9;"></div>
<div class="b" style="left:33px;top:742.7px;width:793px;height:1px;background:#8f8f8f;"></div>
<div class="b" style="left:33px;top:729px;width:1px;height:14px;background:#a9a9a9;"></div>
<div class="b" style="left:115.3px;top:729px;width:1px;height:14px;background:#8f8f8f;"></div>
<div class="b" style="left:306.8px;top:729px;width:1px;height:14px;background:#8f8f8f;"></div>
<div class="b" style="left:394.8px;top:729px;width:1px;height:14px;background:#8f8f8f;"></div>
<div class="b" style="left:477.8px;top:729px;width:1px;height:14px;background:#8f8f8f;"></div>
<div class="b" style="left:567.8px;top:729px;width:1px;height:14px;background:#8f8f8f;"></div>
<div class="b" style="left:648.8px;top:729px;width:1px;height:14px;background:#8f8f8f;"></div>
<div class="b" style="left:739.8px;top:729px;width:1px;height:14px;background:#8f8f8f;"></div>
<div class="b" style="left:825.5px;top:729px;width:1px;height:14px;background:#a9a9a9;"></div>
<div class="b" style="left:33px;top:756.7px;width:793px;height:1px;background:#8f8f8f;"></div>
<div class="b" style="left:33px;top:743px;width:1px;height:14px;background:#a9a9a9;"></div>
<div class="b" style="left:115.3px;top:743px;width:1px;height:14px;background:#8f8f8f;"></div>
<div class="b" style="left:306.8px;top:743px;width:1px;height:14px;background:#8f8f8f;"></div>
<div class="b" style="left:394.8px;top:743px;width:1px;height:14px;background:#8f8f8f;"></div>
<div class="b" style="left:477.8px;top:743px;width:1px;height:14px;background:#8f8f8f;"></div>
<div class="b" style="left:567.8px;top:743px;width:1px;height:14px;background:#8f8f8f;"></div>
<div class="b" style="left:648.8px;top:743px;width:1px;height:14px;background:#8f8f8f;"></div>
<div class="b" style="left:739.8px;top:743px;width:1px;height:14px;background:#8f8f8f;"></div>
<div class="b" style="left:825.5px;top:743px;width:1px;height:14px;background:#a9a9a9;"></div>
<div class="b" style="left:33px;top:784.7px;width:793px;height:1px;background:#8f8f8f;"></div>
<div class="b" style="left:33px;top:771px;width:1px;height:14px;background:#a9a9a9;"></div>
<div class="b" style="left:306.8px;top:771px;width:1px;height:14px;background:#8f8f8f;"></div>
<div class="b" style="left:394.8px;top:771px;width:1px;height:14px;background:#8f8f8f;"></div>
<div class="b" style="left:477.8px;top:771px;width:1px;height:14px;background:#8f8f8f;"></div>
<div class="b" style="left:567.8px;top:771px;width:1px;height:14px;background:#8f8f8f;"></div>
<div class="b" style="left:648.8px;top:771px;width:1px;height:14px;background:#8f8f8f;"></div>
<div class="b" style="left:739.8px;top:771px;width:1px;height:14px;background:#8f8f8f;"></div>
<div class="b" style="left:825.5px;top:771px;width:1px;height:14px;background:#a9a9a9;"></div>
<div class="b" style="left:33px;top:295px;width:793px;height:1px;background:#b4b4b4;"></div>
<div class="b" style="left:33px;top:295px;width:1px;height:1px;background:#a0a0a0;"></div>
<div class="b" style="left:33px;top:393px;width:793px;height:1px;background:#b4b4b4;"></div>
<div class="b" style="left:33px;top:393px;width:1px;height:1px;background:#a0a0a0;"></div>
<div class="b" style="left:33px;top:491px;width:793px;height:1px;background:#b4b4b4;"></div>
<div class="b" style="left:33px;top:491px;width:1px;height:1px;background:#a0a0a0;"></div>
<div class="b" style="left:33px;top:603px;width:793px;height:1px;background:#b4b4b4;"></div>
<div class="b" style="left:33px;top:603px;width:1px;height:1px;background:#a0a0a0;"></div>
<div class="b" style="left:33px;top:729px;width:793px;height:1px;background:#b4b4b4;"></div>
<div class="b" style="left:33px;top:729px;width:1px;height:1px;background:#a0a0a0;"></div>
<div class="b" style="left:33px;top:771px;width:793px;height:1px;background:#b4b4b4;"></div>
<div class="b" style="left:33px;top:771px;width:1px;height:1px;background:#a0a0a0;"></div>
<div class="b" style="left:33px;top:785.5px;width:793px;height:3.5px;background:#868686;"></div>
<div class="b" style="left:33px;top:785.5px;width:793px;height:3.5px;overflow:hidden">
<span class="t" style="left:12.00px;top:1.24px;font:normal bold 9.33px/10.73px 'Liberation Sans', sans-serif;color:#fff;transform:scaleX(1.2153);transform-origin:0 50%;-webkit-text-stroke:0.3px #fff;">TOTAL (with risk):</span>
<span class="t" style="left:313.30px;top:1.24px;font:normal bold 9.33px/10.73px 'Liberation Sans', sans-serif;color:#fff;transform:scaleX(1.1600);transform-origin:50% 50%;-webkit-text-stroke:0.3px #fff;">30</span>
<span class="t" style="left:396.71px;top:1.24px;font:normal bold 9.33px/10.73px 'Liberation Sans', sans-serif;color:#fff;transform:scaleX(1.1600);transform-origin:50% 50%;-webkit-text-stroke:0.3px #fff;">$72</span>
<span class="t" style="left:480.12px;top:1.24px;font:normal bold 9.33px/10.73px 'Liberation Sans', sans-serif;color:#fff;transform:scaleX(1.1600);transform-origin:50% 50%;-webkit-text-stroke:0.3px #fff;">$120</span>
<span class="t" style="left:565.62px;top:1.24px;font:normal bold 9.33px/10.73px 'Liberation Sans', sans-serif;color:#fff;transform:scaleX(1.1600);transform-origin:50% 50%;-webkit-text-stroke:0.3px #fff;">$120</span>
<span class="t" style="left:651.62px;top:1.24px;font:normal bold 9.33px/10.73px 'Liberation Sans', sans-serif;color:#fff;transform:scaleX(1.1600);transform-origin:50% 50%;-webkit-text-stroke:0.3px #fff;">$120</span>
<span class="t" style="left:740.12px;top:1.24px;font:normal bold 9.33px/10.73px 'Liberation Sans', sans-serif;color:#fff;transform:scaleX(1.1600);transform-origin:50% 50%;-webkit-text-stroke:0.3px #fff;">$444</span>
</div>
<div class="b" style="left:857px;top:192px;width:19px;height:597px;background:#fff;"></div>
<div class="b" style="left:860px;top:195.5px;width:14.5px;height:13.5px;background:#fff;border:1px solid #cdcdcd;box-sizing:border-box;"></div>
<svg class="b" style="left:863px;top:199px" width="9" height="6" viewBox="0 0 9 6"><path d="M0.5 5.5 L4.5 1 L8.5 5.5 Z" fill="#777"/></svg>
<div class="b" style="left:860px;top:210px;width:14.5px;height:117.5px;background:#fff;border:1px solid #c4c4c4;box-sizing:border-box;"></div>
<div class="b" style="left:860px;top:775.5px;width:14.5px;height:13.5px;background:#fff;border:1px solid #cdcdcd;box-sizing:border-box;"></div>
<svg class="b" style="left:863px;top:780px" width="9" height="6" viewBox="0 0 9 6"><path d="M0.5 0.5 L4.5 5 L8.5 0.5 Z" fill="#777"/></svg>
<div class="b" style="left:3px;top:789px;width:873px;height:28px;background:#fff;"></div>
<div class="b" style="left:21px;top:789px;width:836px;height:1px;background:#c6c6c6;"></div>
<svg class="b" style="left:27.4px;top:798px" width="5" height="9" viewBox="0 0 5 9"><path d="M4.6 0.4 L0.6 4.4 L4.6 8.4 Z" fill="#c8c8c8"/></svg>
<svg class="b" style="left:56.6px;top:798px" width="5" height="9" viewBox="0 0 5 9"><path d="M0.4 0.4 L4.4 4.4 L0.4 8.4 Z" fill="#c8c8c8"/></svg>
<div class="b" style="left:100.5px;top:789px;width:104.5px;height:24px;background:#fff;border:1px solid #c6c6c6;box-sizing:border-box;border-top:none;border-bottom:none;"></div>
<div class="b" style="left:100.5px;top:811px;width:104.5px;height:2.2px;background:#217346;"></div>
<span class="t" style="left:113.50px;top:794.31px;font:normal bold 12.5px/14.37px 'Liberation Sans', sans-serif;color:#217346;letter-spacing:-0.133px;">Project Costs</span>
<span class="t" style="left:42.00px;top:788.78px;font:normal normal 9.6px/11.04px 'Liberation Sans', sans-serif;color:rgba(120,120,120,0.16);letter-spacing:0.435px;">www.heritagechristiancollege.com</span>
<svg class="b" style="left:237px;top:794px" width="16" height="16" viewBox="0 0 16 16"><circle cx="8" cy="8" r="6.6" fill="none" stroke="#777" stroke-width="1.1"/><path d="M8 4.5 V11.5 M4.5 8 H11.5" stroke="#777" stroke-width="1.3"/></svg>
<div class="b" style="left:527.5px;top:798.5px;width:1.5px;height:1.5px;background:#b0b0b0;"></div>
<div class="b" style="left:527.5px;top:802.5px;width:1.5px;height:1.5px;background:#b0b0b0;"></div>
<div class="b" style="left:527.5px;top:806.5px;width:1.5px;height:1.5px;background:#b0b0b0;"></div>
<div class="b" style="left:545px;top:796.5px;width:311.5px;height:14px;background:#f0f0f0;"></div>
<div class="b" style="left:545px;top:796.5px;width:13.5px;height:14px;background:#fff;border:1px solid #cdcdcd;box-sizing:border-box;"></div>
<svg class="b" style="left:549px;top:799.5px" width="6" height="9" viewBox="0 0 6 9"><path d="M5 0.5 L1 4.5 L5 8.5 Z" fill="#777"/></svg>
<div class="b" style="left:558px;top:796.5px;width:251.5px;height:14px;background:#fff;border:1px solid #bcbcbc;box-sizing:border-box;"></div>
<div class="b" style="left:842.5px;top:796.5px;width:14px;height:14px;background:#fff;border:1px solid #cdcdcd;box-sizing:border-box;"></div>
<svg class="b" style="left:847px;top:799.5px" width="6" height="9" viewBox="0 0 6 9"><path d="M1 0.5 L5 4.5 L1 8.5 Z" fill="#777"/></svg>
<div class="b" style="left:3px;top:817px;width:873px;height:19.5px;background:#217346;"></div>
<span class="t" style="left:8.90px;top:821.88px;font:normal normal 11px/12.65px 'Liberation Sans', sans-serif;color:#fff;transform:scaleX(0.8442);transform-origin:0 50%;">READY</span>
<div class="b" style="left:581px;top:817px;width:37.8px;height:19.5px;background:#1a5e38;"></div>
<span class="t" style="left:838.00px;top:821.67px;font:normal normal 11px/12.65px 'Liberation Sans', sans-serif;color:#fff;transform:scaleX(0.9532);transform-origin:0 50%;">70%</span>
<div class="b" style="left:703px;top:827px;width:5px;height:1.6px;background:#fff;"></div>
<div class="b" style="left:713px;top:827.3px;width:96px;height:1px;background:#fff;"></div>
<div class="b" style="left:743.3px;top:822px;width:3.6px;height:11.5px;background:#fff;"></div>
<div class="b" style="left:759.5px;top:825px;width:1px;height:5.5px;background:#fff;"></div>
<div class="b" style="left:813.5px;top:827px;width:8.5px;height:1.8px;background:#fff;"></div>
<div class="b" style="left:816.9px;top:823.6px;width:1.8px;height:8.5px;background:#fff;"></div>
<div class="b" style="left:3px;top:3px;width:873px;height:834px;border:1px solid rgba(255,250,170,0.55);box-sizing:border-box;pointer-events:none;"></div>
<svg class="b" style="left:11px;top:7px" width="17" height="16" viewBox="0 0 17 16">
<rect x="8.5" y="2.2" width="7.6" height="11.6" fill="#fff" stroke="#217346" stroke-width="0.9"/>
<path d="M10 4.6H15M10 6.8H15M10 9H15M10 11.2H15" stroke="#217346" stroke-width="1.1"/>
<path d="M12.4 3V13" stroke="#fff" stroke-width="0.7"/>
<path d="M0.3 2.1 L9.8 0.4 V15.6 L0.3 13.9 Z" fill="#217346"/>
<text x="4.8" y="11.3" font-size="9.4" font-weight="bold" fill="#fff" font-family="Liberation Sans, sans-serif" text-anchor="middle">X</text>
</svg>
<svg class="b" style="left:40.5px;top:8px" width="15.5" height="14" viewBox="0 0 15.5 14">
<path d="M0.4 0.4 H14.8 V13.6 H0.4 Z" fill="#8653a6"/>
<rect x="2.6" y="1.6" width="10" height="5" fill="#fff"/>
<rect x="3.6" y="8.6" width="8" height="5" fill="#fff"/>
<rect x="5.2" y="10.2" width="2.4" height="3.4" fill="#8653a6"/>
</svg>
<svg class="b" style="left:68.6px;top:6.4px" width="19.4" height="16.2" viewBox="0 0 18 15">
<path d="M1.2 5.6 L6.6 1.2 V10 Z" fill="#b7b7b7"/>
<path d="M5 5.6 H9.6 C12.8 5.6 14.4 7.4 14.4 9.4 C14.4 11.6 12.8 13 10.4 13 H9.4" fill="none" stroke="#b7b7b7" stroke-width="2.1"/>
</svg>
<svg class="b" style="left:90px;top:13px" width="6" height="4" viewBox="0 0 6 4"><path d="M0.3 0.3 H5.7 L3 3.6 Z" fill="#c4c4c4"/></svg>
<svg class="b" style="left:107.6px;top:6.4px" width="19.4" height="16.2" viewBox="0 0 18 15">
<path d="M16.8 5.6 L11.4 1.2 V10 Z" fill="#b7b7b7"/>
<path d="M13 5.6 H8.4 C5.2 5.6 3.6 7.4 3.6 9.4 C3.6 11.6 5.2 13 7.6 13 H8.6" fill="none" stroke="#b7b7b7" stroke-width="2.1"/>
</svg>
<svg class="b" style="left:129.8px;top:13px" width="6" height="4" viewBox="0 0 6 4"><path d="M0.3 0.3 H5.7 L3 3.6 Z" fill="#c4c4c4"/></svg>
<div class="b" style="left:146px;top:4.5px;width:85px;height:21px;background:#fff;border:1px solid #b4b4b4;box-sizing:border-box;"></div>
<span class="t" style="left:149.50px;top:7.81px;font:normal normal 12.5px/14.37px 'Liberation Sans', sans-serif;color:#222;transform:scaleX(0.9194);transform-origin:0 50%;">Arial</span>
<svg class="b" style="left:221px;top:13px" width="7" height="4" viewBox="0 0 7 4"><path d="M0.3 0.3 H6.3 L3.3 3.7 Z" fill="#555"/></svg>
<svg class="b" style="left:240px;top:11px" width="7" height="8" viewBox="0 0 7 8"><path d="M0.5 1.2 H6.5" stroke="#666" stroke-width="1.2"/><path d="M0.6 3.6 H6.4 L3.5 7 Z" fill="#666"/></svg>
<span class="t" style="left:742.67px;top:7.74px;font:normal bold 13.5px/15.52px 'Liberation Sans', sans-serif;color:#666;">?</span>
<svg class="b" style="left:768.5px;top:9.5px" width="14" height="11" viewBox="0 0 14 11">
<rect x="0.6" y="0.6" width="12.8" height="9.6" fill="none" stroke="#777" stroke-width="1.1"/>
<path d="M0.6 2.7 H13.4" stroke="#777" stroke-width="1"/>
<path d="M7 9 V4.6 M4.6 6.6 L7 4.3 L9.4 6.6" fill="none" stroke="#666" stroke-width="1.1"/>
</svg>
<div class="b" style="left:799.7px;top:16px;width:9.6px;height:2.2px;background:#777;"></div>
<svg class="b" style="left:829px;top:10px" width="11" height="10" viewBox="0 0 11 10"><rect x="0.6" y="1.3" width="9.6" height="8" fill="none" stroke="#777" stroke-width="1.2"/><rect x="0" y="0" width="10.8" height="2.6" fill="#777"/></svg>
<svg class="b" style="left:858px;top:10.3px" width="10.4" height="9.6" viewBox="0 0 10.4 9.6"><path d="M0.8 0.8 L9.6 8.8 M9.6 0.8 L0.8 8.8" stroke="#666" stroke-width="2.1"/></svg>
<svg class="b" style="left:831.5px;top:38px" width="6" height="4" viewBox="0 0 6 4"><path d="M0.2 0.3 H5.8 L3 3.7 Z" fill="#777"/></svg>
<svg class="b" style="left:14px;top:61.5px" width="29" height="31" viewBox="0 0 29 31">
<rect x="0.3" y="3.7" width="23.9" height="24.6" rx="1.2" fill="#efc470"/>
<path d="M5 7.6 V5.2 Q5 4.2 6 4.2 H9.6 Q9.6 0.8 12 0.8 Q14.4 0.8 14.4 4.2 H18 Q19 4.2 19 5.2 V7.6 Z" fill="#777"/>
<circle cx="12" cy="3.3" r="1.1" fill="#fff"/>
<path d="M14.4 11.9 H23.6 L27.6 15.9 V29.9 H14.4 Z" fill="#fff" stroke="#777" stroke-width="1"/>
<path d="M23.4 12 V16.1 H27.5" fill="none" stroke="#777" stroke-width="1"/>
</svg>
<span class="t" style="left:12.60px;top:96.13px;font:normal normal 12.3px/14.14px 'Liberation Sans', sans-serif;color:#444;transform:scaleX(0.8711);transform-origin:0 50%;">Paste</span>
<svg class="b" style="left:22.6px;top:117px" width="6.199999999999999" height="4.0" viewBox="0 0 6.199999999999999 4.0"><path d="M0.3 0.3 H5.8999999999999995 L3.0999999999999996 3.6999999999999997 Z" fill="#666"/></svg>
<svg class="b" style="left:50.5px;top:58.8px" width="15" height="17" viewBox="0 0 15 17">
<path d="M3 0.6 L9.6 11.8 M12 0.6 L5.4 11.8" stroke="#666" stroke-width="1.7"/>
<circle cx="3.4" cy="13.2" r="2.4" fill="#fff" stroke="#4a7ebb" stroke-width="1.1"/>
<circle cx="11.6" cy="13.2" r="2.4" fill="#fff" stroke="#4a7ebb" stroke-width="1.1"/>
</svg>
<svg class="b" style="left:50px;top:84px" width="16" height="14" viewBox="0 0 16 14">
<path d="M0.6 0.6 H6 L8.4 3 V9.6 H0.6 Z" fill="#fff" stroke="#666" stroke-width="1"/>
<path d="M2.2 3.4 H5 M2.2 5.4 H5 M2.2 7.4 H5" stroke="#4a7ebb" stroke-width="0.9"/>
<path d="M6.6 3.6 H12 L14.8 6.4 V13.2 H6.6 Z" fill="#fff" stroke="#666" stroke-width="1"/>
<path d="M11.9 3.7 V6.5 H14.7" fill="none" stroke="#666" stroke-width="0.9"/>
<path d="M8.4 7.6 H12.8 M8.4 9.4 H12.8 M8.4 11.2 H12.8" stroke="#4a7ebb" stroke-width="0.9"/>
</svg>
<svg class="b" style="left:71.8px;top:90px" width="6.199999999999999" height="4.0" viewBox="0 0 6.199999999999999 4.0"><path d="M0.3 0.3 H5.8999999999999995 L3.0999999999999996 3.6999999999999997 Z" fill="#666"/></svg>
<svg class="b" style="left:50px;top:106.5px" width="17" height="14" viewBox="0 0 17 14">
<path d="M0.8 7.2 L6.6 4.2 L11 9.2 L6 13.4 Z" fill="#efc470"/>
<path d="M6 4 L8.6 1.9 L13.4 7.2 L10.8 9.4 Z" fill="#6b6b6b"/>
<path d="M10.8 3.6 L13.6 0.7 L15.8 2.8 L13 5.8 Z" fill="#6b6b6b"/>
</svg>
<svg class="b" style="left:75px;top:134.5px" width="8" height="8" viewBox="0 0 8 8"><path d="M0.5 5 V0.5 H5" fill="none" stroke="#777" stroke-width="1"/><path d="M2.8 2.8 L6.6 6.6" stroke="#777" stroke-width="1.1"/><path d="M7.3 3.4 V7.3 H3.4 Z" fill="#777"/></svg>
<div class="b" style="left:91px;top:65.3px;width:110.6px;height:22.6px;background:#fff;border:1px solid #ababab;box-sizing:border-box;"></div>
<div class="b" style="left:202.4px;top:65.3px;width:42.6px;height:22.6px;background:#fff;border:1px solid #ababab;box-sizing:border-box;"></div>
<span class="t" style="left:94.00px;top:70.05px;font:normal normal 12.6px/14.49px 'Liberation Sans', sans-serif;color:#222;transform:scaleX(0.9443);transform-origin:0 50%;">Arial</span>
<svg class="b" style="left:191.4px;top:74.6px" width="6.199999999999999" height="4.0" viewBox="0 0 6.199999999999999 4.0"><path d="M0.3 0.3 H5.8999999999999995 L3.0999999999999996 3.6999999999999997 Z" fill="#666"/></svg>
<span class="t" style="left:205.50px;top:70.05px;font:normal normal 12.6px/14.49px 'Liberation Sans', sans-serif;color:#222;transform:scaleX(0.8419);transform-origin:0 50%;">10</span>
<svg class="b" style="left:234.5px;top:74.6px" width="6.199999999999999" height="4.0" viewBox="0 0 6.199999999999999 4.0"><path d="M0.3 0.3 H5.8999999999999995 L3.0999999999999996 3.6999999999999997 Z" fill="#666"/></svg>
<span class="t" style="left:251.30px;top:68.89px;font:normal normal 13.4px/15.41px 'Liberation Sans', sans-serif;color:#555;transform:scaleX(1.0517);transform-origin:0 50%;">A</span>
<svg class="b" style="left:260px;top:68.5px" width="5" height="3.4" viewBox="0 0 5 3.4"><path d="M0.2 3.2 L2.5 0.3 L4.8 3.2 Z" fill="#4a7ebb"/></svg>
<span class="t" style="left:274.00px;top:71.39px;font:normal normal 10.8px/12.42px 'Liberation Sans', sans-serif;color:#555;transform:scaleX(1.0829);transform-origin:0 50%;">A</span>
<svg class="b" style="left:281.3px;top:68.8px" width="5" height="3.4" viewBox="0 0 5 3.4"><path d="M0.2 0.2 H4.8 L2.5 3.2 Z" fill="#4a7ebb"/></svg>
<span class="t" style="left:97.30px;top:99.47px;font:normal bold 12.4px/14.26px 'Liberation Sans', sans-serif;color:#555;transform:scaleX(0.8935);transform-origin:0 50%;">B</span>
<span class="t" style="left:120.50px;top:99.24px;font:italic bold 12.8px/14.72px 'Liberation Serif', serif;color:#555;">I</span>
<span class="t" style="left:141.20px;top:99.30px;font:normal bold 12px/13.80px 'Liberation Sans', sans-serif;color:#555;transform:scaleX(0.9686);transform-origin:0 50%;">U</span>
<div class="b" style="left:141px;top:112px;width:9px;height:1.3px;background:#555;"></div>
<svg class="b" style="left:159.4px;top:105.4px" width="6.199999999999999" height="4.0" viewBox="0 0 6.199999999999999 4.0"><path d="M0.3 0.3 H5.8999999999999995 L3.0999999999999996 3.6999999999999997 Z" fill="#777"/></svg>
<div class="b" style="left:173px;top:96.5px;width:1px;height:21px;background:#e2e2e2;"></div>
<svg class="b" style="left:182px;top:100px" width="14" height="14" viewBox="0 0 14 14"><g fill="#8a8a8a" shape-rendering="crispEdges"><rect x="0" y="0" width="1" height="1"/><rect x="0" y="6" width="1" height="1"/><rect x="2" y="0" width="1" height="1"/><rect x="2" y="6" width="1" height="1"/><rect x="4" y="0" width="1" height="1"/><rect x="4" y="6" width="1" height="1"/><rect x="6" y="0" width="1" height="1"/><rect x="6" y="6" width="1" height="1"/><rect x="8" y="0" width="1" height="1"/><rect x="8" y="6" width="1" height="1"/><rect x="10" y="0" width="1" height="1"/><rect x="10" y="6" width="1" height="1"/><rect x="12" y="0" width="1" height="1"/><rect x="12" y="6" width="1" height="1"/><rect x="0" y="2" width="1" height="1"/><rect x="6" y="2" width="1" height="1"/><rect x="12" y="2" width="1" height="1"/><rect x="0" y="4" width="1" height="1"/><rect x="6" y="4" width="1" height="1"/><rect x="12" y="4" width="1" height="1"/><rect x="0" y="8" width="1" height="1"/><rect x="6" y="8" width="1" height="1"/><rect x="12" y="8" width="1" height="1"/><rect x="0" y="10" width="1" height="1"/><rect x="6" y="10" width="1" height="1"/><rect x="12" y="10" width="1" height="1"/></g><rect x="0" y="12" width="13" height="1.2" fill="#666"/></svg>
<svg class="b" style="left:202.6px;top:105.4px" width="6.199999999999999" height="4.0" viewBox="0 0 6.199999999999999 4.0"><path d="M0.3 0.3 H5.8999999999999995 L3.0999999999999996 3.6999999999999997 Z" fill="#777"/></svg>
<div class="b" style="left:216.3px;top:96.5px;width:1px;height:21px;background:#e2e2e2;"></div>
<svg class="b" style="left:223.8px;top:97.6px" width="17" height="18" viewBox="0 0 17 18">
<path d="M7.4 3.4 L13.4 9 L8 13.4 L2.2 8.2 Z" fill="#fff" stroke="#666" stroke-width="1.1"/>
<path d="M6.2 5.6 V2 Q6.2 0.7 7.3 0.7 Q8.5 0.7 8.5 2 V4.6" fill="none" stroke="#666" stroke-width="1"/>
<path d="M12.6 6 Q16.4 6.6 16.2 11.4 Q14 10.6 13.2 9.2 Z" fill="#4a7ebb"/>
<rect x="0" y="13.2" width="16.1" height="4" fill="#fff02a"/>
</svg>
<svg class="b" style="left:245.5px;top:105.4px" width="6.199999999999999" height="4.0" viewBox="0 0 6.199999999999999 4.0"><path d="M0.3 0.3 H5.8999999999999995 L3.0999999999999996 3.6999999999999997 Z" fill="#777"/></svg>
<span class="t" style="left:261.20px;top:98.50px;font:normal normal 13.4px/15.41px 'Liberation Sans', sans-serif;color:#555;transform:scaleX(1.1189);transform-origin:0 50%;">A</span>
<div class="b" style="left:258px;top:111px;width:16px;height:4px;background:#e81123;"></div>
<svg class="b" style="left:279.5px;top:105.4px" width="6.199999999999999" height="4.0" viewBox="0 0 6.199999999999999 4.0"><path d="M0.3 0.3 H5.8999999999999995 L3.0999999999999996 3.6999999999999997 Z" fill="#777"/></svg>
<svg class="b" style="left:281.5px;top:134.5px" width="8" height="8" viewBox="0 0 8 8"><path d="M0.5 5 V0.5 H5" fill="none" stroke="#777" stroke-width="1"/><path d="M2.8 2.8 L6.6 6.6" stroke="#777" stroke-width="1.1"/><path d="M7.3 3.4 V7.3 H3.4 Z" fill="#777"/></svg>
<svg class="b" style="left:302.2px;top:58px" width="14" height="22" viewBox="0 0 14 22"><rect x="0" y="2.00" width="13.7" height="1.2" fill="#6a6a6a"/><rect x="0" y="5.00" width="13.7" height="1.2" fill="#6a6a6a"/><rect x="0" y="8.00" width="13.7" height="1.2" fill="#6a6a6a"/></svg>
<svg class="b" style="left:324px;top:58px" width="14" height="22" viewBox="0 0 14 22"><rect x="0" y="5.80" width="13.7" height="1.2" fill="#6a6a6a"/><rect x="0" y="8.80" width="13.7" height="1.2" fill="#6a6a6a"/><rect x="0" y="11.80" width="13.7" height="1.2" fill="#6a6a6a"/></svg>
<div class="b" style="left:342px;top:57px;width:22px;height:22.8px;background:#9fd5b7;"></div>
<svg class="b" style="left:346.2px;top:58px" width="14" height="22" viewBox="0 0 14 22"><rect x="0" y="10.80" width="13.7" height="1.2" fill="#4c7a5f"/><rect x="0" y="13.80" width="13.7" height="1.2" fill="#4c7a5f"/><rect x="0" y="16.80" width="13.7" height="1.2" fill="#4c7a5f"/></svg>
<svg class="b" style="left:369.5px;top:59.5px" width="18" height="16" viewBox="0 0 18 16">
<rect x="0.8" y="0.8" width="9.6" height="4" fill="#fff" stroke="#666" stroke-width="1"/>
<path d="M2.6 2.8 H14.6" stroke="#4a7ebb" stroke-width="1"/>
<rect x="0.8" y="8.6" width="9.6" height="6.2" fill="#fff" stroke="#666" stroke-width="1"/>
<path d="M2.6 10.6 H8.6 M2.6 12.8 H8.6" stroke="#4a7ebb" stroke-width="1"/>
<path d="M14.6 2.8 Q17 3.4 16.4 6.6 Q15.6 9.4 11.4 9.6" fill="none" stroke="#4a7ebb" stroke-width="1"/>
<path d="M13.6 7.4 L11 9.6 L13.8 11.6" fill="none" stroke="#4a7ebb" stroke-width="1"/>
</svg>
<svg class="b" style="left:302.2px;top:85px" width="14" height="12" viewBox="0 0 14 12"><rect x="0" y="0.80" width="13.7" height="1.2" fill="#6a6a6a"/><rect x="0" y="3.80" width="10" height="1.2" fill="#6a6a6a"/><rect x="0" y="6.80" width="13.7" height="1.2" fill="#6a6a6a"/><rect x="0" y="9.80" width="10" height="1.2" fill="#6a6a6a"/></svg>
<svg class="b" style="left:324px;top:85px" width="14" height="12" viewBox="0 0 14 12"><rect x="0" y="0.80" width="13.7" height="1.2" fill="#6a6a6a"/><rect x="1.9" y="3.80" width="9.899999999999999" height="1.2" fill="#6a6a6a"/><rect x="0" y="6.80" width="13.7" height="1.2" fill="#6a6a6a"/><rect x="1.9" y="9.80" width="9.899999999999999" height="1.2" fill="#6a6a6a"/></svg>
<svg class="b" style="left:346.2px;top:85px" width="14" height="12" viewBox="0 0 14 12"><rect x="0" y="0.80" width="13.7" height="1.2" fill="#6a6a6a"/><rect x="3.6999999999999993" y="3.80" width="10.0" height="1.2" fill="#6a6a6a"/><rect x="0" y="6.80" width="13.7" height="1.2" fill="#6a6a6a"/><rect x="3.6999999999999993" y="9.80" width="10.0" height="1.2" fill="#6a6a6a"/></svg>
<svg class="b" style="left:369.5px;top:83px" width="16" height="15" viewBox="0 0 16 15">
<rect x="0.8" y="0.8" width="14.2" height="13.4" fill="#fff" stroke="#666" stroke-width="1.1"/>
<path d="M0.8 4.2 H15 M0.8 10.8 H15 M5.6 0.8 V4.2 M10.4 0.8 V4.2 M5.6 10.8 V14.2 M10.4 10.8 V14.2" stroke="#666" stroke-width="1"/>
<path d="M3 7.5 H12.8" stroke="#4a7ebb" stroke-width="1"/>
<path d="M4.6 5.9 L2.8 7.5 L4.6 9.1 M11.2 5.9 L13 7.5 L11.2 9.1" fill="none" stroke="#4a7ebb" stroke-width="1"/>
</svg>
<svg class="b" style="left:391.5px;top:89.6px" width="6.199999999999999" height="4.0" viewBox="0 0 6.199999999999999 4.0"><path d="M0.3 0.3 H5.8999999999999995 L3.0999999999999996 3.6999999999999997 Z" fill="#777"/></svg>
<svg class="b" style="left:301px;top:108.6px" width="17" height="11.5" viewBox="0 0 17 11.5"><rect x="2.2" y="0.40" width="13.8" height="1.2" fill="#6a6a6a"/><rect x="7.3" y="3.40" width="7.7" height="1.2" fill="#6a6a6a"/><rect x="7.3" y="6.60" width="6.1000000000000005" height="1.2" fill="#6a6a6a"/><rect x="2.2" y="9.70" width="13.8" height="1.2" fill="#6a6a6a"/><path d="M0.2 5.7 L3.6 2.3 V9.1 Z" fill="#3f78bd"/><path d="M2.6 5.7 H6.6" stroke="#3f78bd" stroke-width="1.9"/></svg>
<svg class="b" style="left:322.8px;top:108.6px" width="17" height="11.5" viewBox="0 0 17 11.5"><rect x="2.2" y="0.40" width="13.8" height="1.2" fill="#6a6a6a"/><rect x="7.3" y="3.40" width="7.7" height="1.2" fill="#6a6a6a"/><rect x="7.3" y="6.60" width="6.1000000000000005" height="1.2" fill="#6a6a6a"/><rect x="2.2" y="9.70" width="13.8" height="1.2" fill="#6a6a6a"/><path d="M6.8 5.7 L3.4 2.3 V9.1 Z" fill="#3f78bd"/><path d="M0.4 5.7 H4.4" stroke="#3f78bd" stroke-width="1.9"/></svg>
<div class="b" style="left:346.3px;top:103.5px;width:1px;height:20.5px;background:#e2e2e2;"></div>
<span class="t" style="left:352.64px;top:105.02px;font:normal normal 11.8px/13.57px 'Liberation Sans', sans-serif;color:#555;transform:rotate(-47deg);transform-origin:50% 50%;">ab</span>
<svg class="b" style="left:354px;top:106px" width="18" height="15" viewBox="0 0 18 15"><path d="M7.2 14.2 L15.4 5.4" stroke="#555" stroke-width="1.2"/><path d="M12.6 5.2 H15.8 V8.4" fill="none" stroke="#555" stroke-width="1.1"/></svg>
<svg class="b" style="left:373.6px;top:112.4px" width="6.199999999999999" height="4.0" viewBox="0 0 6.199999999999999 4.0"><path d="M0.3 0.3 H5.8999999999999995 L3.0999999999999996 3.6999999999999997 Z" fill="#777"/></svg>
<svg class="b" style="left:395px;top:134.5px" width="8" height="8" viewBox="0 0 8 8"><path d="M0.5 5 V0.5 H5" fill="none" stroke="#777" stroke-width="1"/><path d="M2.8 2.8 L6.6 6.6" stroke="#777" stroke-width="1.1"/><path d="M7.3 3.4 V7.3 H3.4 Z" fill="#777"/></svg>
<div class="b" style="left:411px;top:57px;width:78px;height:22.6px;background:#fff;border:1px solid #ababab;box-sizing:border-box;"></div>
<span class="t" style="left:414.60px;top:61.76px;font:normal normal 12.6px/14.49px 'Liberation Sans', sans-serif;color:#222;transform:scaleX(0.8703);transform-origin:0 50%;">General</span>
<svg class="b" style="left:478.6px;top:66.8px" width="6.199999999999999" height="4.0" viewBox="0 0 6.199999999999999 4.0"><path d="M0.3 0.3 H5.8999999999999995 L3.0999999999999996 3.6999999999999997 Z" fill="#666"/></svg>
<svg class="b" style="left:413.5px;top:82.5px" width="18" height="17" viewBox="0 0 18 17">
<rect x="0.9" y="0.9" width="15" height="8" fill="#fff" stroke="#3f6fae" stroke-width="1.6"/>
<circle cx="7.6" cy="4.6" r="1.9" fill="#3f6fae"/>
<ellipse cx="12.6" cy="8" rx="3.8" ry="1.5" fill="#efc470" stroke="#fff" stroke-width="0.6"/>
<ellipse cx="12.6" cy="10.2" rx="3.8" ry="1.5" fill="#efc470" stroke="#fff" stroke-width="0.6"/>
<ellipse cx="8" cy="12.4" rx="3.8" ry="1.5" fill="#efc470" stroke="#fff" stroke-width="0.6"/>
<ellipse cx="8" cy="14.6" rx="3.8" ry="1.5" fill="#efc470" stroke="#fff" stroke-width="0.6"/>
</svg>
<svg class="b" style="left:435.6px;top:89.8px" width="6.199999999999999" height="4.0" viewBox="0 0 6.199999999999999 4.0"><path d="M0.3 0.3 H5.8999999999999995 L3.0999999999999996 3.6999999999999997 Z" fill="#777"/></svg>
<span class="t" style="left:450.00px;top:83.24px;font:normal normal 14.2px/16.33px 'Liberation Sans', sans-serif;color:#555;transform:scaleX(1.0297);transform-origin:0 50%;">%</span>
<span class="t" style="left:474.93px;top:76.62px;font:normal bold 17px/19.55px 'Liberation Sans', sans-serif;color:#555;">,</span>
<svg class="b" style="left:414px;top:107.6px" width="7" height="6" viewBox="0 0 7 6"><path d="M0.8 3 H6.4" stroke="#3f6fae" stroke-width="1.2"/><path d="M3.2 0.6 L0.8 3 L3.2 5.4" fill="none" stroke="#3f6fae" stroke-width="1.2"/></svg>
<span class="t" style="left:421.53px;top:105.80px;font:normal normal 8px/9.20px 'Liberation Sans', sans-serif;color:#444;transform:scaleX(0.9892);transform-origin:100% 50%;-webkit-text-stroke:0.15px #444;">.0</span>
<span class="t" style="left:417.07px;top:112.80px;font:normal normal 8px/9.20px 'Liberation Sans', sans-serif;color:#444;transform:scaleX(1.0247);transform-origin:100% 50%;-webkit-text-stroke:0.15px #444;">.00</span>
<span class="t" style="left:439.07px;top:105.80px;font:normal normal 8px/9.20px 'Liberation Sans', sans-serif;color:#444;transform:scaleX(1.0247);transform-origin:100% 50%;-webkit-text-stroke:0.15px #444;">.00</span>
<svg class="b" style="left:436px;top:114.6px" width="7" height="6" viewBox="0 0 7 6"><path d="M0.4 3 H6" stroke="#3f6fae" stroke-width="1.2"/><path d="M3.6 0.6 L6 3 L3.6 5.4" fill="none" stroke="#3f6fae" stroke-width="1.2"/></svg>
<span class="t" style="left:443.53px;top:112.80px;font:normal normal 8px/9.20px 'Liberation Sans', sans-serif;color:#444;transform:scaleX(0.9892);transform-origin:100% 50%;-webkit-text-stroke:0.15px #444;">.0</span>
<svg class="b" style="left:482px;top:134.5px" width="8" height="8" viewBox="0 0 8 8"><path d="M0.5 5 V0.5 H5" fill="none" stroke="#777" stroke-width="1"/><path d="M2.8 2.8 L6.6 6.6" stroke="#777" stroke-width="1.1"/><path d="M7.3 3.4 V7.3 H3.4 Z" fill="#777"/></svg>
<svg class="b" style="left:501px;top:60px" width="17" height="16.5" viewBox="0 0 17 16.5">
<rect x="0.5" y="0.5" width="13" height="11.6" fill="#fff" stroke="#b5b5b5" stroke-width="0.8"/>
<path d="M4.8 0.5 V12 M9.2 0.5 V12 M0.5 4.3 H13.5 M0.5 8.2 H13.5" stroke="#b5b5b5" stroke-width="0.8"/>
<rect x="0.2" y="0.2" width="6.6" height="3.6" fill="#d9492d"/>
<rect x="0.2" y="4.4" width="6.6" height="3.2" fill="#3f6fae"/>
<rect x="0.2" y="8.2" width="3.2" height="3.6" fill="#d9492d"/>
<rect x="6.6" y="7" width="9.4" height="8.6" fill="#fff" stroke="#555" stroke-width="1.1"/>
<text x="11.3" y="14.4" font-size="9.5" fill="#333" font-family="Liberation Sans, sans-serif" text-anchor="middle">≠</text>
</svg>
<span class="t" style="left:521.00px;top:61.93px;font:normal normal 12.3px/14.14px 'Liberation Sans', sans-serif;color:#444;transform:scaleX(0.9901);transform-origin:0 50%;">Conditional Formatting</span>
<svg class="b" style="left:646.8px;top:67.2px" width="6.199999999999999" height="4.0" viewBox="0 0 6.199999999999999 4.0"><path d="M0.3 0.3 H5.8999999999999995 L3.0999999999999996 3.6999999999999997 Z" fill="#666"/></svg>
<svg class="b" style="left:501px;top:82.5px" width="17" height="17" viewBox="0 0 17 17">
<rect x="0.6" y="0.6" width="14.6" height="11.8" fill="#fff" stroke="#777" stroke-width="1.1"/>
<rect x="4.4" y="4.4" width="7.4" height="8" fill="#c9dbee"/>
<path d="M4.2 0.6 V12.4 M8 0.6 V12.4 M11.8 0.6 V12.4 M0.6 4.2 H15.2 M0.6 8.2 H15.2" stroke="#b5b5b5" stroke-width="0.8"/>
<path d="M16.4 1.4 L6.6 12.6 H16.4 Z" fill="#fff"/>

<path d="M15.6 3.2 L10 9.4 L12 11.2 L16.2 6.6 Z" fill="#6b6b6b"/>
<path d="M10 9.2 Q6.6 9.4 6.2 12.6 Q5.8 14.6 4 15.6 Q9.8 16.6 12.2 11.4 Z" fill="#3f78bd"/>
<path d="M9.6 10.6 Q8.2 11 8 12.6" fill="none" stroke="#dbe8f6" stroke-width="0.9"/>
</svg>
<span class="t" style="left:521.00px;top:84.53px;font:normal normal 12.3px/14.14px 'Liberation Sans', sans-serif;color:#444;transform:scaleX(0.9323);transform-origin:0 50%;">Format as Table</span>
<svg class="b" style="left:605.2px;top:89.6px" width="6.199999999999999" height="4.0" viewBox="0 0 6.199999999999999 4.0"><path d="M0.3 0.3 H5.8999999999999995 L3.0999999999999996 3.6999999999999997 Z" fill="#666"/></svg>
<svg class="b" style="left:501px;top:105.4px" width="17" height="17" viewBox="0 0 17 17">
<rect x="0.6" y="0.6" width="14.6" height="11.8" fill="#fff" stroke="#777" stroke-width="1.1"/>
<rect x="4.2" y="3.6" width="9" height="6.6" fill="#c9dbee"/>
<path d="M4.2 0.6 V12.4 M0.6 3.6 H15.2 M0.6 10.2 H15.2" stroke="#b5b5b5" stroke-width="0.8"/>
<path d="M16.4 1.4 L6.6 12.6 H16.4 Z" fill="#fff"/>

<path d="M15.6 3.2 L10 9.4 L12 11.2 L16.2 6.6 Z" fill="#6b6b6b"/>
<path d="M10 9.2 Q6.6 9.4 6.2 12.6 Q5.8 14.6 4 15.6 Q9.8 16.6 12.2 11.4 Z" fill="#3f78bd"/>
<path d="M9.6 10.6 Q8.2 11 8 12.6" fill="none" stroke="#dbe8f6" stroke-width="0.9"/>
</svg>
<span class="t" style="left:521.00px;top:107.53px;font:normal normal 12.3px/14.14px 'Liberation Sans', sans-serif;color:#444;transform:scaleX(0.8831);transform-origin:0 50%;">Cell Styles</span>
<svg class="b" style="left:575.2px;top:112.6px" width="6.199999999999999" height="4.0" viewBox="0 0 6.199999999999999 4.0"><path d="M0.3 0.3 H5.8999999999999995 L3.0999999999999996 3.6999999999999997 Z" fill="#666"/></svg>
<svg class="b" style="left:670.5px;top:59.5px" width="17" height="16.5" viewBox="0 0 17 16.5">
<path d="M0.8 0.8 H8.6 V4.6 H0.8 Z M4.7 0.8 V4.6" fill="#fff" stroke="#777" stroke-width="1"/>
<path d="M0.8 11.6 H8.6 V15.6 H0.8 Z M4.7 11.6 V15.6 M0.8 11.6 V8.4 H4.7 V11.6" fill="#fff" stroke="#777" stroke-width="1"/>
<rect x="7.4" y="5.4" width="8.6" height="3.4" fill="#c9dbee" stroke="#777" stroke-width="1"/>
<path d="M11.7 5.4 V8.8" stroke="#777" stroke-width="0.9"/>
<path d="M1 7 H6.8" stroke="#2f6db5" stroke-width="1.6"/><path d="M3.8 4.6 L1.2 7 L3.8 9.4" fill="none" stroke="#2f6db5" stroke-width="1.5"/>
</svg>
<span class="t" style="left:689.80px;top:61.53px;font:normal normal 12.3px/14.14px 'Liberation Sans', sans-serif;color:#444;transform:scaleX(0.9101);transform-origin:0 50%;">Insert</span>
<svg class="b" style="left:728.7px;top:66.8px" width="6.199999999999999" height="4.0" viewBox="0 0 6.199999999999999 4.0"><path d="M0.3 0.3 H5.8999999999999995 L3.0999999999999996 3.6999999999999997 Z" fill="#666"/></svg>
<svg class="b" style="left:670.5px;top:82.6px" width="17" height="16.5" viewBox="0 0 17 16.5">
<path d="M0.8 0.8 H8.6 V4.2 H0.8 Z M4.7 0.8 V4.2" fill="#fff" stroke="#777" stroke-width="1"/>
<rect x="4.4" y="5.4" width="3.6" height="3" fill="#c9dbee" stroke="#777" stroke-width="0.9"/>
<path d="M0.8 11.6 H8.6 V15.6 H0.8 Z M4.7 11.6 V15.6 M0.8 11.6 V8.4 H4.4" fill="#fff" stroke="#777" stroke-width="1"/>
<path d="M10.2 4 L15.8 9.6 M15.8 4 L10.2 9.6" stroke="#e0553a" stroke-width="1.4"/>
</svg>
<span class="t" style="left:689.80px;top:84.53px;font:normal normal 12.3px/14.14px 'Liberation Sans', sans-serif;color:#444;transform:scaleX(0.9002);transform-origin:0 50%;">Delete</span>
<svg class="b" style="left:732.8px;top:89.6px" width="6.199999999999999" height="4.0" viewBox="0 0 6.199999999999999 4.0"><path d="M0.3 0.3 H5.8999999999999995 L3.0999999999999996 3.6999999999999997 Z" fill="#666"/></svg>
<svg class="b" style="left:670.5px;top:105.8px" width="17" height="16.5" viewBox="0 0 17 16.5">
<path d="M0.8 0.4 V3 M12.8 0.4 V3 M1.6 1.7 H12" stroke="#2f6db5" stroke-width="1"/>
<path d="M3.4 0.4 L1.8 1.7 L3.4 3 M10.2 0.4 L11.8 1.7 L10.2 3" fill="none" stroke="#2f6db5" stroke-width="0.9"/>
<rect x="0.8" y="4.6" width="14.4" height="10.8" fill="#fff" stroke="#777" stroke-width="1"/>
<path d="M4.4 4.6 V15.4 M8.8 4.6 V15.4 M12 4.6 V15.4 M0.8 7.4 H15.2 M0.8 10.8 H15.2 M0.8 13.4 H15.2" stroke="#b5b5b5" stroke-width="0.8"/>
<rect x="4.6" y="7.4" width="4.2" height="3.6" fill="#2f5fa8"/>
</svg>
<span class="t" style="left:689.80px;top:107.53px;font:normal normal 12.3px/14.14px 'Liberation Sans', sans-serif;color:#444;transform:scaleX(0.9499);transform-origin:0 50%;">Format</span>
<svg class="b" style="left:730.8px;top:112.6px" width="6.199999999999999" height="4.0" viewBox="0 0 6.199999999999999 4.0"><path d="M0.3 0.3 H5.8999999999999995 L3.0999999999999996 3.6999999999999997 Z" fill="#666"/></svg>
<svg class="b" style="left:754.5px;top:59.5px" width="16.5" height="16" viewBox="0 0 16.5 16"><path d="M0.6 0.6 H15 V2.8 H5.2 L9.8 7.8 L5.2 13 H15.2 V15.2 H0.6 V13.8 L6.6 7.8 L0.6 2 Z" fill="#444"/></svg>
<svg class="b" style="left:776.4px;top:66.6px" width="6.199999999999999" height="4.0" viewBox="0 0 6.199999999999999 4.0"><path d="M0.3 0.3 H5.8999999999999995 L3.0999999999999996 3.6999999999999997 Z" fill="#666"/></svg>
<span class="t" style="left:790.52px;top:58.54px;font:normal bold 8.8px/10.12px 'Liberation Sans', sans-serif;color:#4a80c8;">A</span>
<span class="t" style="left:791.01px;top:67.74px;font:normal bold 8.8px/10.12px 'Liberation Sans', sans-serif;color:#9361b8;">Z</span>
<svg class="b" style="left:798.4px;top:65px" width="8.4" height="7.6" viewBox="0 0 8.4 7.6"><path d="M0.2 0.3 H7.8 L5 3.3 V7 L3 7 V3.3 Z" fill="#6a6a6a"/></svg>
<svg class="b" style="left:809.6px;top:66.6px" width="6.199999999999999" height="4.0" viewBox="0 0 6.199999999999999 4.0"><path d="M0.3 0.3 H5.8999999999999995 L3.0999999999999996 3.6999999999999997 Z" fill="#666"/></svg>
<svg class="b" style="left:755.8px;top:83px" width="14.5" height="16" viewBox="0 0 14.5 16">
<rect x="0.6" y="0.6" width="13.2" height="14.6" fill="#fff" stroke="#777" stroke-width="1.1"/>
<rect x="0.2" y="0.2" width="14" height="3.2" fill="#777"/>
<path d="M7.2 5 V11.4" stroke="#2f6db5" stroke-width="2.3"/><path d="M3.4 8.6 L7.2 12.4 L11 8.6" fill="none" stroke="#2f6db5" stroke-width="2.2"/>
</svg>
<svg class="b" style="left:774.6px;top:89.4px" width="6.199999999999999" height="4.0" viewBox="0 0 6.199999999999999 4.0"><path d="M0.3 0.3 H5.8999999999999995 L3.0999999999999996 3.6999999999999997 Z" fill="#666"/></svg>
<svg class="b" style="left:789.6px;top:83.6px" width="16" height="14" viewBox="0 0 16 14">
<path d="M2.8 3 H6.2 V5 L7 6.4 V12.8 H0.6 V7.4 Z" fill="#666"/>
<path d="M12.8 3 H9.4 V5 L8.6 6.4 V12.8 H15 V7.4 Z" fill="#666"/>
<rect x="3" y="0.6" width="3" height="2.6" fill="#666"/><rect x="9.6" y="0.6" width="3" height="2.6" fill="#666"/>
<rect x="6.4" y="5.6" width="2.8" height="3" fill="#666"/>
<path d="M2 9.6 V11.8 M13.6 9.6 V11.8" stroke="#ddd" stroke-width="0.8"/>
</svg>
<svg class="b" style="left:809.6px;top:89.4px" width="6.199999999999999" height="4.0" viewBox="0 0 6.199999999999999 4.0"><path d="M0.3 0.3 H5.8999999999999995 L3.0999999999999996 3.6999999999999997 Z" fill="#666"/></svg>
<svg class="b" style="left:756px;top:106.4px" width="15" height="14" viewBox="0 0 15 14">
<path d="M8.4 0.8 L12.8 4.6 L6 11.4 L1 7.6 Z" fill="#ee8da3"/>
<path d="M1 7.6 L6 11.4 L4.8 12.4 H3 L0.6 10.2 Z" fill="#f6c5d0"/>
<path d="M4.6 13 H13.4" stroke="#777" stroke-width="1"/>
</svg>
<svg class="b" style="left:774.6px;top:112.4px" width="6.199999999999999" height="4.0" viewBox="0 0 6.199999999999999 4.0"><path d="M0.3 0.3 H5.8999999999999995 L3.0999999999999996 3.6999999999999997 Z" fill="#666"/></svg>
<svg class="b" style="left:859px;top:134.6px" width="10" height="7" viewBox="0 0 10 7"><path d="M0.9 6 L4.9 1.6 L8.9 6" fill="none" stroke="#555" stroke-width="1.7"/></svg>
<svg class="b" style="left:94.6px;top:167.4px" width="6.6" height="4.2" viewBox="0 0 6.6 4.2"><path d="M0.3 0.3 H6.3 L3.3 3.9 Z" fill="#777"/></svg>
<div class="b" style="left:122px;top:165px;width:2px;height:2px;background:#b8b8b8;"></div>
<div class="b" style="left:122px;top:169px;width:2px;height:2px;background:#b8b8b8;"></div>
<div class="b" style="left:122px;top:173px;width:2px;height:2px;background:#b8b8b8;"></div>
<svg class="b" style="left:148px;top:162px" width="18" height="17" viewBox="0 0 18 17"><path d="M1.2 1.2 L16.2 15.6 M16.2 1.2 L1.2 15.6" stroke="#c9c9c9" stroke-width="2"/></svg>
<svg class="b" style="left:184px;top:162.5px" width="20" height="17" viewBox="0 0 20 17"><path d="M1.4 9.4 L6.6 15 L17.6 1.2" fill="none" stroke="#cfcfcf" stroke-width="2.6"/></svg>
<span class="t" style="left:219.20px;top:157.12px;font:italic bold 21px/24.15px 'Liberation Serif', serif;color:#777;">f</span>
<span class="t" style="left:228.00px;top:162.03px;font:italic bold 17px/19.55px 'Liberation Serif', serif;color:#777;">x</span>
<svg class="b" style="left:858.6px;top:167.6px" width="12" height="9" viewBox="0 0 12 9"><path d="M1.2 1.4 L6 6.8 L10.8 1.4" fill="none" stroke="#777" stroke-width="2.6"/></svg>
<svg class="b" style="left:61px;top:821px" width="14" height="13" viewBox="0 0 14 13">
<rect x="1" y="3.6" width="12" height="8.8" fill="none" stroke="#fff" stroke-width="1.2"/>
<path d="M1 6.6 H13 M1 9.4 H13 M5 6.6 V12.4 M9 6.6 V12.4" stroke="#fff" stroke-width="1"/>
<circle cx="3.2" cy="3.2" r="3.1" fill="#dff2e6" stroke="#217346" stroke-width="0.6"/>
</svg>
<svg class="b" style="left:593px;top:820.8px" width="13.4" height="13.2" viewBox="0 0 13.4 13.2">
<rect x="0.6" y="0.6" width="12.2" height="12" fill="none" stroke="#fff" stroke-width="1.2"/>
<path d="M4.7 0.6 V12.6 M8.7 0.6 V12.6 M0.6 4.6 H12.8 M0.6 8.6 H12.8" stroke="#fff" stroke-width="1.2"/>
</svg>
<svg class="b" style="left:631px;top:820.8px" width="14" height="13.2" viewBox="0 0 14 13.2">
<rect x="0.6" y="0.6" width="12.8" height="12" fill="none" stroke="#fff" stroke-width="1.2"/>
<rect x="3.6" y="3" width="6.8" height="7.4" fill="none" stroke="#fff" stroke-width="1"/>
<path d="M5 5.4 H9 M5 7 H9 M5 8.6 H9" stroke="#fff" stroke-width="0.8"/>
</svg>
<svg class="b" style="left:668.6px;top:820.8px" width="15" height="13.2" viewBox="0 0 15 13.2">
<rect x="0.6" y="0.6" width="13.6" height="12" fill="none" stroke="#fff" stroke-width="1.2"/>
<path d="M0.6 0.6 H5 V8.2 H0.6 Z" fill="#fff"/>
<path d="M9.4 0.6 V8.2 H5" fill="none" stroke="#fff" stroke-width="1.3"/>
</svg>
</body></html>
